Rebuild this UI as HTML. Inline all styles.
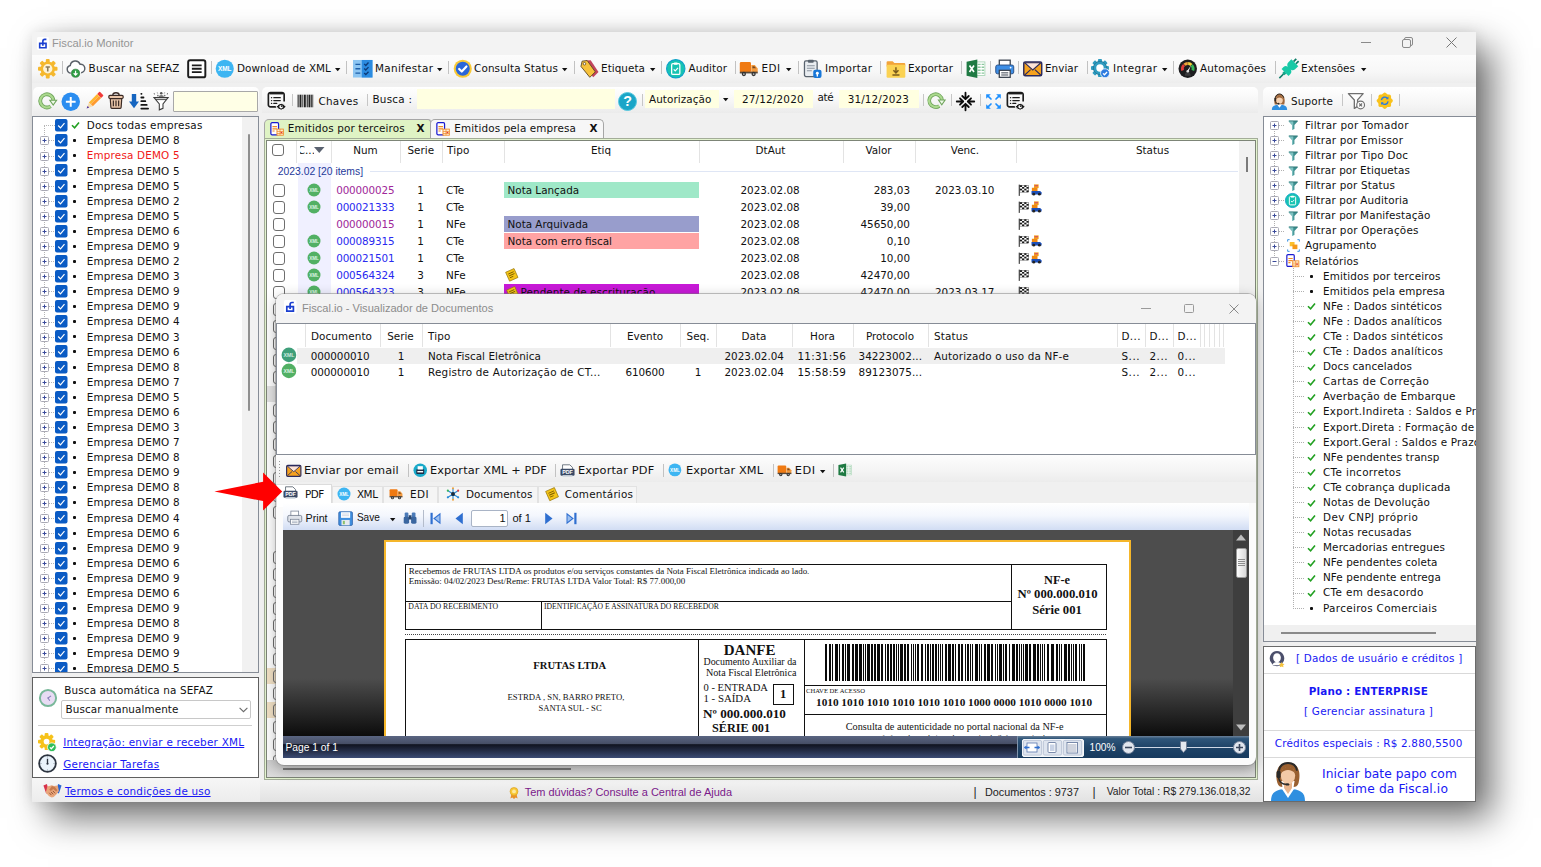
<!DOCTYPE html>
<html lang="pt-BR"><head><meta charset="utf-8"><title>Fiscal.io Monitor</title>
<style>
html,body{margin:0;padding:0;background:#fff;}
body{width:1541px;height:867px;overflow:hidden;position:relative;font-family:'DejaVu Sans','Liberation Sans',sans-serif;font-size:11px;}
#a div,#a span,#a svg{position:absolute;box-sizing:border-box;}
#a span{white-space:nowrap;}
#a svg{overflow:visible;}
#a{position:absolute;left:0;top:0;width:1541px;height:867px;overflow:hidden;}
</style></head>
<body><div id="a">
<div style="left:32px;top:32px;width:1443.6px;height:770px;background:#f0f0f0;box-shadow:0 0 14px rgba(0,0,0,.10),16px 16px 34px rgba(0,0,0,.56);"></div>
<div style="left:32px;top:32px;width:1443.6px;height:23px;background:#f3f3f3;"></div>
<svg style="left:36.5px;top:37px;" width="12" height="13" viewBox="0 0 12.5 13.5"><rect width="12.500" height="13.500" rx="1.500" fill="#fff"/><path d="M2.800 6.600h6.600v4.600H2.800zM6.100 9V4.400a1.900 1.900 0 0 1 1.900-1.900h1.800" stroke="#1b3fd0" stroke-width="1.700" fill="none"/></svg>
<span style="top:34.9px;line-height:16px;font-size:11.2px;color:#959595;font-family:'Liberation Sans',sans-serif;left:52px;">Fiscal.io Monitor</span>
<div style="left:1361px;top:42px;width:10px;height:1px;background:#8a8a8a;"></div>
<svg style="left:1402px;top:37px;" width="11" height="11" viewBox="0 0 11 11"><rect x=".5" y="2.5" width="8" height="8" rx="1.5" fill="none" stroke="#8a8a8a"/><path d="M2.5 2.5V2A1.5 1.5 0 0 1 4 .5h5A1.5 1.5 0 0 1 10.5 2v5A1.5 1.5 0 0 1 9 8.500h-.5" fill="none" stroke="#8a8a8a"/></svg>
<svg style="left:1446px;top:37px;" width="11" height="11" viewBox="0 0 11 11"><path d="M.5.5l10 10M10.500.5l-10 10" stroke="#777" stroke-width="1"/></svg>
<div style="left:32px;top:55px;width:1443.6px;height:28px;background:linear-gradient(#fcfcfc,#f7f7f7 60%,#ededed);"></div>
<svg style="left:38px;top:58.5px;" width="19.5" height="19.5" viewBox="0 0 20 20"><g transform="translate(10 10)"><g fill="#f5b82e"><rect x="-2" y="-10" width="4" height="5" rx="1" transform="rotate(0)"/><rect x="-2" y="-10" width="4" height="5" rx="1" transform="rotate(45)"/><rect x="-2" y="-10" width="4" height="5" rx="1" transform="rotate(90)"/><rect x="-2" y="-10" width="4" height="5" rx="1" transform="rotate(135)"/><rect x="-2" y="-10" width="4" height="5" rx="1" transform="rotate(180)"/><rect x="-2" y="-10" width="4" height="5" rx="1" transform="rotate(225)"/><rect x="-2" y="-10" width="4" height="5" rx="1" transform="rotate(270)"/><rect x="-2" y="-10" width="4" height="5" rx="1" transform="rotate(315)"/><circle r="7.4"/></g><circle r="4.8" fill="#fdf3d6"/><path d="M-2.2-2.6h4.4v1.6h-1.4v3.8h-1.6v-3.8h-1.4z" fill="#8a7b5a"/></g></svg>
<div style="left:62px;top:61px;width:1px;height:13px;background:#c2c2c2;"></div>
<svg style="left:66px;top:58.5px;" width="19.5" height="19.5" viewBox="0 0 20 20"><path d="M5 14.5a4 4 0 0 1-.6-7.9A5.2 5.2 0 0 1 14.4 5.4a4.3 4.3 0 0 1 1.1 8.6" fill="#fff" stroke="#5a6068" stroke-width="1.5"/><circle cx="9.8" cy="14.6" r="4.2" fill="#2f9e44" stroke="#1d6e2d" stroke-width=".6"/><path d="M9.8 12v4.2M7.9 14.6l1.9 1.9 1.9-1.9" stroke="#fff" stroke-width="1.2" fill="none"/></svg>
<span style="top:60.2px;line-height:16px;font-size:10.4px;color:#111;letter-spacing:0.248px;left:88.5px;">Buscar na SEFAZ</span>
<svg style="left:187px;top:58.5px;" width="19.5" height="19.5" viewBox="0 0 20 20"><rect x="1.2" y="1.2" width="17.6" height="17.6" rx="2" fill="#fff" stroke="#1c1c1c" stroke-width="2"/><path d="M5 6.5h10M5 10h10M5 13.5h10" stroke="#1c1c1c" stroke-width="1.8"/></svg>
<div style="left:211px;top:61px;width:1px;height:13px;background:#c2c2c2;"></div>
<svg style="left:215px;top:58.5px;" width="19.5" height="19.5" viewBox="0 0 20 20"><circle cx="10" cy="10" r="9.3" fill="#3db5f2"/><text x="10" y="12.4" font-size="6.6" font-weight="bold" font-family="Liberation Sans,sans-serif" text-anchor="middle" fill="#fff">XML</text></svg>
<span style="top:60.2px;line-height:16px;font-size:10.4px;color:#111;letter-spacing:0.057px;left:237px;">Download de XML</span>
<svg style="left:334.8px;top:67.6px;" width="5.4" height="3.4" viewBox="0 0 5.4 3.4"><path d="M0 0h5.400L2.700 3.200z" fill="#111"/></svg>
<div style="left:346px;top:61px;width:1px;height:13px;background:#c2c2c2;"></div>
<svg style="left:353px;top:58.5px;" width="19.5" height="19.5" viewBox="0 0 20 20"><rect x="0" y="1" width="20" height="18" fill="#8cc5f2"/><rect x="9" y="1" width="11" height="18" fill="#2b8be0"/><path d="M2.5 5.5h5M2.5 10h5M2.5 14.5h5" stroke="#1d5fa8" stroke-width="1.5"/><path d="M11.5 5l1.6 1.6 2.8-3M11.5 9.7l1.6 1.6 2.8-3M11.5 14.4l1.6 1.6 2.8-3" stroke="#0d3b78" stroke-width="1.4" fill="none"/></svg>
<span style="top:60.2px;line-height:16px;font-size:10.4px;color:#111;letter-spacing:0.33px;left:375px;">Manifestar</span>
<svg style="left:436.8px;top:67.6px;" width="5.4" height="3.4" viewBox="0 0 5.4 3.4"><path d="M0 0h5.400L2.700 3.200z" fill="#111"/></svg>
<div style="left:448px;top:61px;width:1px;height:13px;background:#c2c2c2;"></div>
<svg style="left:452.5px;top:58.5px;" width="19.5" height="19.5" viewBox="0 0 20 20"><circle cx="10" cy="10" r="9.3" fill="#f8c936"/><circle cx="10" cy="10" r="7.2" fill="#2a66d9"/><path d="M6.3 10.2l2.7 2.7 4.8-5.2" stroke="#fff" stroke-width="2.2" fill="none" stroke-linecap="round" stroke-linejoin="round"/></svg>
<span style="top:60.2px;line-height:16px;font-size:10.4px;color:#111;letter-spacing:0.142px;left:474px;">Consulta Status</span>
<svg style="left:561.8px;top:67.6px;" width="5.4" height="3.4" viewBox="0 0 5.4 3.4"><path d="M0 0h5.400L2.700 3.200z" fill="#111"/></svg>
<div style="left:574px;top:61px;width:1px;height:13px;background:#c2c2c2;"></div>
<svg style="left:579px;top:58.5px;" width="19.5" height="19.5" viewBox="0 0 20 20"><path d="M5.5 1.5l5-.3 8 12.2-5.4 5.2-8.8-11z" fill="#c2455e" transform="translate(1.5 0)"/><path d="M3.2 2.2l5.2-.6 8.3 11.6-5.6 5.6L2 7.6z" fill="#f7c23c" stroke="#5a4520" stroke-width=".9"/><circle cx="5.6" cy="4.9" r="1.3" fill="#fff" stroke="#5a4520" stroke-width=".8"/></svg>
<span style="top:60.2px;line-height:16px;font-size:10.4px;color:#111;letter-spacing:0.06px;left:601px;">Etiqueta</span>
<svg style="left:649.8px;top:67.6px;" width="5.4" height="3.4" viewBox="0 0 5.4 3.4"><path d="M0 0h5.400L2.700 3.200z" fill="#111"/></svg>
<div style="left:661px;top:61px;width:1px;height:13px;background:#c2c2c2;"></div>
<svg style="left:666px;top:58.5px;" width="19.5" height="19.5" viewBox="0 0 20 20"><circle cx="10" cy="10" r="9.4" fill="#17c3b2"/><circle cx="10" cy="10" r="9.4" fill="none" stroke="#0fa3c9" stroke-width="1.2"/><rect x="5.8" y="4.8" width="8.4" height="11" rx="1.3" fill="none" stroke="#fff" stroke-width="1.3"/><rect x="8" y="3.6" width="4" height="2.4" rx=".8" fill="#fff"/><path d="M7.9 10.6l1.6 1.6 2.8-3" stroke="#fff" stroke-width="1.2" fill="none"/></svg>
<span style="top:60.2px;line-height:16px;font-size:10.4px;color:#111;letter-spacing:0.098px;left:688.5px;">Auditor</span>
<div style="left:735px;top:61px;width:1px;height:13px;background:#c2c2c2;"></div>
<svg style="left:739px;top:58.5px;" width="19.5" height="19.5" viewBox="0 0 20 20"><rect x="0.8" y="3.2" width="11.5" height="10.6" rx="1.4" fill="#f07a12"/><path d="M12.6 6.2h3.6l3 3.6v4h-6.6z" fill="#f39a3e"/><path d="M13.8 7.4h2l1.7 2.2h-3.7z" fill="#7a4a20"/><rect x="0.8" y="13" width="18.4" height="1.8" fill="#5a4a3a"/><circle cx="5" cy="15.4" r="2.2" fill="#333"/><circle cx="15" cy="15.4" r="2.2" fill="#333"/><circle cx="5" cy="15.4" r=".9" fill="#bbb"/><circle cx="15" cy="15.4" r=".9" fill="#bbb"/></svg>
<span style="top:60.2px;line-height:16px;font-size:10.4px;color:#111;letter-spacing:0.426px;left:761.5px;">EDI</span>
<svg style="left:785.8px;top:67.6px;" width="5.4" height="3.4" viewBox="0 0 5.4 3.4"><path d="M0 0h5.400L2.700 3.200z" fill="#111"/></svg>
<div style="left:798px;top:61px;width:1px;height:13px;background:#c2c2c2;"></div>
<svg style="left:803px;top:58.5px;" width="19.5" height="19.5" viewBox="0 0 20 20"><rect x="1.5" y="2" width="13" height="16" rx="1.5" fill="#e9edf1" stroke="#59636e" stroke-width="1.3"/><rect x="5" y=".8" width="6" height="3" rx="1" fill="#59636e"/><path d="M4 7h8M4 9.5h8M4 12h5" stroke="#8a949e" stroke-width="1.1"/><rect x="10.5" y="11" width="8.5" height="8.5" rx="2" fill="#1877d8"/><circle cx="14.7" cy="14.6" r="1.5" fill="#fff"/><rect x="14" y="15" width="1.4" height="3" fill="#fff"/></svg>
<span style="top:60.2px;line-height:16px;font-size:10.4px;color:#111;letter-spacing:0.262px;left:825px;">Importar</span>
<div style="left:880px;top:61px;width:1px;height:13px;background:#c2c2c2;"></div>
<svg style="left:885.5px;top:58.5px;" width="19.5" height="19.5" viewBox="0 0 20 20"><path d="M.6 3.4a1.2 1.2 0 0 1 1.2-1.2h5l1.8 1.9h10a1.2 1.2 0 0 1 1.2 1.2v2.4H.6z" fill="#f2a33a"/><rect x=".6" y="5.8" width="19.2" height="13.4" rx="1.2" fill="#fbd253"/><path d="M10.2 8.4v5.4M7.6 11.6l2.6 2.6 2.6-2.6M6.6 16.4h7.2" stroke="#7a5b1c" stroke-width="1.5" fill="none"/></svg>
<span style="top:60.2px;line-height:16px;font-size:10.4px;color:#111;letter-spacing:0.044px;left:908px;">Exportar</span>
<div style="left:961px;top:61px;width:1px;height:13px;background:#c2c2c2;"></div>
<svg style="left:966px;top:58.5px;" width="19.5" height="19.5" viewBox="0 0 20 20"><rect x="8" y="3" width="11.4" height="14" fill="#fff" stroke="#9fd0ae" stroke-width=".8"/><path d="M12 5.5h3M16 5.5h2.6M12 8.5h3M16 8.5h2.6M12 11.5h3M16 11.5h2.6M12 14.5h3M16 14.5h2.6" stroke="#8cc79e" stroke-width="1.4"/><path d="M.6 2.8L11.6.6v18.8L.6 17.2z" fill="#1f7a43"/><path d="M3.6 6.6l4.6 6.8M8.2 6.6L3.6 13.4" stroke="#fff" stroke-width="1.7"/></svg>
<div style="left:990px;top:61px;width:1px;height:13px;background:#c2c2c2;"></div>
<svg style="left:995px;top:58.5px;" width="19.5" height="19.5" viewBox="0 0 20 20"><rect x="4.4" y="1.2" width="11.2" height="7" fill="#fff" stroke="#39414d" stroke-width="1.3"/><rect x=".8" y="6.2" width="18.4" height="9" rx="1.8" fill="#3d8ee6" stroke="#2a4f86" stroke-width="1"/><rect x="4.4" y="11.6" width="11.2" height="7.2" fill="#fff" stroke="#39414d" stroke-width="1.3"/><path d="M6.4 14.2h7.2M6.4 16.4h7.2" stroke="#39414d" stroke-width="1"/><circle cx="16" cy="8.8" r=".9" fill="#fff"/></svg>
<div style="left:1018px;top:61px;width:1px;height:13px;background:#c2c2c2;"></div>
<svg style="left:1022.5px;top:58.5px;" width="19.5" height="19.5" viewBox="0 0 20 20"><rect x=".8" y="3" width="18.400" height="14.200" rx="1.500" fill="#f6a21e" stroke="#2b2b5e" stroke-width="1.500"/><path d="M1.600 3.800L10 11.200l8.400-7.400z" fill="#fde3d6" stroke="#2b2b5e" stroke-width="1.100"/><path d="M1.800 16.400l6-5.400M18.200 16.400l-6-5.400" stroke="#2b2b5e" stroke-width="1.100"/></svg>
<span style="top:60.2px;line-height:16px;font-size:10.4px;color:#111;letter-spacing:0.029px;left:1045px;">Enviar</span>
<div style="left:1087px;top:61px;width:1px;height:13px;background:#c2c2c2;"></div>
<svg style="left:1091px;top:58.5px;" width="19.5" height="19.5" viewBox="0 0 20 20"><g transform="translate(9.2 9.2)"><g fill="#2f9cc0"><rect x="-2.1" y="-9.2" width="4.2" height="5" rx="1" transform="rotate(0)"/><rect x="-2.1" y="-9.2" width="4.2" height="5" rx="1" transform="rotate(45)"/><rect x="-2.1" y="-9.2" width="4.2" height="5" rx="1" transform="rotate(90)"/><rect x="-2.1" y="-9.2" width="4.2" height="5" rx="1" transform="rotate(135)"/><rect x="-2.1" y="-9.2" width="4.2" height="5" rx="1" transform="rotate(180)"/><rect x="-2.1" y="-9.2" width="4.2" height="5" rx="1" transform="rotate(225)"/><rect x="-2.1" y="-9.2" width="4.2" height="5" rx="1" transform="rotate(270)"/><rect x="-2.1" y="-9.2" width="4.2" height="5" rx="1" transform="rotate(315)"/><circle r="6.8"/></g><circle r="3.8" fill="#fff"/><circle r="6.8" fill="none" stroke="#1d6d8c" stroke-width=".7"/></g><circle cx="14.4" cy="14.6" r="4.6" fill="#2d7be0" stroke="#fff" stroke-width=".8"/><path d="M12.3 14.7l1.5 1.5 2.7-2.9" stroke="#fff" stroke-width="1.3" fill="none"/></svg>
<span style="top:60.2px;line-height:16px;font-size:10.4px;color:#111;letter-spacing:0.334px;left:1113px;">Integrar</span>
<svg style="left:1161.8px;top:67.6px;" width="5.4" height="3.4" viewBox="0 0 5.4 3.4"><path d="M0 0h5.400L2.700 3.200z" fill="#111"/></svg>
<div style="left:1173px;top:61px;width:1px;height:13px;background:#c2c2c2;"></div>
<svg style="left:1178px;top:58.5px;" width="19.5" height="19.5" viewBox="0 0 20 20"><circle cx="10" cy="10" r="9.5" fill="#1d1d1f"/><path d="M3.4 12.2a6.8 6.8 0 0 1 1.8-7l2 2a4 4 0 0 0-1.1 4.2z" fill="#e03a3a"/><path d="M5.6 4.8A6.8 6.8 0 0 1 10 3.2v2.9a4 4 0 0 0-2.4.8z" fill="#f2a33a"/><path d="M10.4 3.2a6.8 6.8 0 0 1 4.4 1.9l-2.1 2a4 4 0 0 0-2.3-1z" fill="#f2d23a"/><path d="M15.1 5.4a6.8 6.8 0 0 1 1.5 6.8l-2.7-.9a4 4 0 0 0-.9-3.9z" fill="#35b558"/><path d="M9.4 12.2l3.8-5.6-2.4 6.2z" fill="#fff"/><circle cx="10" cy="12.8" r="1.4" fill="#ddd"/><path d="M6.8 17.2l1-3h4.4l1 3z" fill="#3a3a3d"/></svg>
<span style="top:60.2px;line-height:16px;font-size:10.4px;color:#111;letter-spacing:0.161px;left:1200px;">Automações</span>
<div style="left:1275px;top:61px;width:1px;height:13px;background:#c2c2c2;"></div>
<svg style="left:1279px;top:58.5px;" width="19.5" height="19.5" viewBox="0 0 20 20"><g transform="rotate(45 10 10)"><rect x="7.400" y="-2.600" width="1.800" height="4" fill="#0d7d68"/><rect x="10.800" y="-2.600" width="1.800" height="4" fill="#0d7d68"/><path d="M5 1.200h10v4.600a5 4 0 0 1-10 0z" fill="#17c9a6"/><path d="M5 15.400v-2.800a5 4 0 0 1 10 0v2.800z" fill="#17c9a6"/><rect x="8.400" y="15.200" width="3.200" height="2.600" fill="#12a88b"/><rect x="9.200" y="17.600" width="1.600" height="6" fill="#0d7d68"/></g></svg>
<span style="top:60.2px;line-height:16px;font-size:10.4px;color:#111;letter-spacing:0.076px;left:1301px;">Extensões</span>
<svg style="left:1360.8px;top:67.6px;" width="5.4" height="3.4" viewBox="0 0 5.4 3.4"><path d="M0 0h5.400L2.700 3.200z" fill="#111"/></svg>
<div style="left:32px;top:780px;width:1443.6px;height:22px;background:linear-gradient(#f3f3f3,#e2e2e2);"></div>
<div style="left:32px;top:778px;width:228px;height:24px;background:linear-gradient(#f6f6f6,#ececec);"></div>
<svg style="left:508px;top:785.5px;" width="12" height="14" viewBox="0 0 20 20"><path d="M6 11l-2 8 3.2-1.6L10 20l2.8-2.6L16 19l-2-8z" fill="#e8912a"/><circle cx="10" cy="7.4" r="6.6" fill="#f8c936" stroke="#d89a1a" stroke-width="1"/><circle cx="10" cy="7.4" r="3.2" fill="#fde9a0"/></svg>
<span style="top:784.2px;line-height:16px;font-size:10.98px;color:#7a1a8a;font-family:'Liberation Sans',sans-serif;left:524.7px;">Tem dúvidas? Consulte a Central de Ajuda</span>
<span style="top:784.2px;line-height:16px;font-size:12px;color:#222;font-family:'Liberation Sans',sans-serif;left:973.5px;">|</span>
<span style="top:784.2px;line-height:16px;font-size:10.84px;color:#222;font-family:'Liberation Sans',sans-serif;left:985px;">Documentos : 9737</span>
<span style="top:784.2px;line-height:16px;font-size:12px;color:#222;font-family:'Liberation Sans',sans-serif;left:1092.5px;">|</span>
<span style="top:784.2px;line-height:16px;font-size:10.31px;color:#222;font-family:'Liberation Sans',sans-serif;left:1106.7px;">Valor Total : R$ 279.136.018,32</span>
<div style="left:33px;top:87px;width:226px;height:30px;background:linear-gradient(#ffffff,#f6f6f6 55%,#e9e9e9);border-radius:5px 5px 0 0;"></div>
<svg style="left:38.4px;top:92.4px;" width="19" height="18" viewBox="0 0 19 18"><path d="M15.400 8.400A6.600 6.600 0 1 0 12.600 14.300" fill="none" stroke="#6fa55c" stroke-width="3.800"/><path d="M15.400 8.400A6.600 6.600 0 1 0 12.600 14.300" fill="none" stroke="#abd98e" stroke-width="2.200"/><path d="M11.800 8.300h6.800l-3.400 4.800z" fill="#eef8e8" stroke="#6fa55c" stroke-width="1.100"/></svg>
<svg style="left:61px;top:91.5px;" width="19.5" height="19.5" viewBox="0 0 20 20"><circle cx="10" cy="10" r="9.5" fill="#2b8df0"/><path d="M10 5v10M5 10h10" stroke="#fff" stroke-width="2"/></svg>
<svg style="left:83.5px;top:91.5px;" width="19.2" height="19.2" viewBox="-1 -1 22 22"><g transform="rotate(45 10 10)"><rect x="6.800" y="-3" width="6.400" height="4" rx=".8" fill="#f03a3a"/><rect x="6.800" y="1" width="3.200" height="13.500" fill="#ffb52e"/><rect x="10" y="1" width="3.200" height="13.500" fill="#ff9a2e"/><path d="M6.800 14.500h6.400L10 21z" fill="#f6dcae"/><path d="M8.700 18.400h2.600L10 21.400z" fill="#4a2fa0"/></g></svg>
<svg style="left:107.7px;top:91.3px;" width="16" height="19.5" viewBox="0 0 20 20"><path d="M6 3.200a4 3.200 0 0 1 8 0" fill="none" stroke="#3a2a25" stroke-width="1.600"/><rect x="1" y="3.400" width="18" height="3.800" rx="1.500" fill="#e8c4a8" stroke="#3a2a25" stroke-width="1.500"/><path d="M2.800 7.400h14.400l-.8 10.800a1.600 1.600 0 0 1-1.600 1.300H5.200a1.600 1.600 0 0 1-1.600-1.300z" fill="#e8c4a8" stroke="#3a2a25" stroke-width="1.500"/><path d="M6.700 9.600v7.400M10 9.600v7.400M13.300 9.600v7.400" stroke="#3a2a25" stroke-width="1.500"/></svg>
<svg style="left:128.5px;top:93px;" width="20" height="16.5" viewBox="0 0 20 16.500"><path d="M5 1v9" stroke="#1565c0" stroke-width="4.400"/><path d="M0 8.600h10l-5 6.600z" fill="#1565c0"/><g stroke="#141414" stroke-width="1.800" stroke-linecap="round"><path d="M12.300 .8h.2M12.300 4.500h2.200M12.300 8.200h4M12.300 11.900h5.400M12.300 15.600h6.800"/></g></svg>
<svg style="left:153px;top:91.3px;" width="16" height="19.5" viewBox="0 0 16.500 20"><path d="M1 6.800h14.600l-5.300 6.400v4.600l-3.800 1.600v-6.200z" fill="#fff" stroke="#3a3a3a" stroke-width="1.100"/><path d="M3 8.800h10.600" stroke="#3a3a3a" stroke-width=".9"/><path d="M1.200 2l.3 1.600M4.400 1.500l.4 1M12 1.500l-.4 1M15 2l-.3 1.600" stroke="#555" stroke-width=".8"/><circle cx="8.500" cy="2.200" r="1.300" fill="#555"/><path d="M5.600 6.200a3 3 0 0 1 5.800 0" fill="#777"/><circle cx="5" cy="4.600" r=".9" fill="#777"/><circle cx="12" cy="4.600" r=".9" fill="#777"/></svg>
<div style="left:173px;top:91px;width:85px;height:21px;background:#ffffe6;border:1px solid #a8a8a8;border-radius:1px;"></div>
<div style="left:32px;top:116px;width:227px;height:557px;background:#fff;border:1px solid #868c96;"></div>
<div style="left:241.5px;top:117px;width:16.5px;height:555px;background:#f1f1f1;"></div>
<div style="left:247.5px;top:134px;width:2px;height:277px;background:#8f8f8f;border-radius:1px;"></div>
<div style="left:44px;top:126px;width:1px;height:546px;background:repeating-linear-gradient(#b5b5b5 0 1px,transparent 1px 2px);"></div>
<div style="left:44px;top:125px;width:11px;height:1px;background:repeating-linear-gradient(90deg,#b5b5b5 0 1px,transparent 1px 2px);"></div>
<svg style="left:54.5px;top:119px;" width="12.5" height="12.5" viewBox="0 0 12.5 12.5"><rect width="12.500" height="12.500" rx="2" fill="#0a5bc4"/><path d="M3.2 6.500l2.300 2.300 4-4.600" stroke="#fff" stroke-width="1.200" fill="none"/></svg>
<svg style="left:70.5px;top:121.4px;" width="9" height="8" viewBox="0 0 9 8"><path d="M1 4.200l2.600 2.600L8 1.400" stroke="#22a022" stroke-width="1.600" fill="none"/></svg>
<span style="top:117.3px;line-height:16px;font-size:10.4px;color:#111;letter-spacing:0.215px;left:86.8px;">Docs todas empresas</span>
<div style="left:49px;top:140px;width:6px;height:1px;background:repeating-linear-gradient(90deg,#b5b5b5 0 1px,transparent 1px 2px);"></div>
<svg style="left:40px;top:136px;" width="9" height="9" viewBox="0 0 9 9"><rect x=".5" y=".5" width="8" height="8" rx="1" fill="#fff" stroke="#a9a9b4"/><path d="M2.500 4.500h4" stroke="#3a4a9a" stroke-width="1"/><path d="M4.500 2.500v4" stroke="#3a4a9a" stroke-width="1"/></svg>
<svg style="left:54.5px;top:134px;" width="12.5" height="12.5" viewBox="0 0 12.5 12.5"><rect width="12.500" height="12.500" rx="2" fill="#0a5bc4"/><path d="M3.2 6.500l2.300 2.300 4-4.600" stroke="#fff" stroke-width="1.200" fill="none"/></svg>
<div style="left:73.3px;top:139.286px;width:3px;height:3px;background:#111;border-radius:1px;"></div>
<span style="top:132.386px;line-height:16px;font-size:10.4px;color:#111;letter-spacing:0.176px;left:86.8px;">Empresa DEMO 8</span>
<div style="left:49px;top:156px;width:6px;height:1px;background:repeating-linear-gradient(90deg,#b5b5b5 0 1px,transparent 1px 2px);"></div>
<svg style="left:40px;top:152px;" width="9" height="9" viewBox="0 0 9 9"><rect x=".5" y=".5" width="8" height="8" rx="1" fill="#fff" stroke="#a9a9b4"/><path d="M2.500 4.500h4" stroke="#3a4a9a" stroke-width="1"/><path d="M4.500 2.500v4" stroke="#3a4a9a" stroke-width="1"/></svg>
<svg style="left:54.5px;top:149px;" width="12.5" height="12.5" viewBox="0 0 12.5 12.5"><rect width="12.500" height="12.500" rx="2" fill="#0a5bc4"/><path d="M3.2 6.500l2.300 2.300 4-4.600" stroke="#fff" stroke-width="1.200" fill="none"/></svg>
<div style="left:73.3px;top:154.372px;width:3px;height:3px;background:#111;border-radius:1px;"></div>
<span style="top:147.472px;line-height:16px;font-size:10.4px;color:#f01818;letter-spacing:0.176px;left:86.8px;">Empresa DEMO 5</span>
<div style="left:49px;top:171px;width:6px;height:1px;background:repeating-linear-gradient(90deg,#b5b5b5 0 1px,transparent 1px 2px);"></div>
<svg style="left:40px;top:167px;" width="9" height="9" viewBox="0 0 9 9"><rect x=".5" y=".5" width="8" height="8" rx="1" fill="#fff" stroke="#a9a9b4"/><path d="M2.500 4.500h4" stroke="#3a4a9a" stroke-width="1"/><path d="M4.500 2.500v4" stroke="#3a4a9a" stroke-width="1"/></svg>
<svg style="left:54.5px;top:164px;" width="12.5" height="12.5" viewBox="0 0 12.5 12.5"><rect width="12.500" height="12.500" rx="2" fill="#0a5bc4"/><path d="M3.2 6.500l2.300 2.300 4-4.600" stroke="#fff" stroke-width="1.200" fill="none"/></svg>
<div style="left:73.3px;top:169.458px;width:3px;height:3px;background:#111;border-radius:1px;"></div>
<span style="top:162.558px;line-height:16px;font-size:10.4px;color:#111;letter-spacing:0.176px;left:86.8px;">Empresa DEMO 5</span>
<div style="left:49px;top:186px;width:6px;height:1px;background:repeating-linear-gradient(90deg,#b5b5b5 0 1px,transparent 1px 2px);"></div>
<svg style="left:40px;top:182px;" width="9" height="9" viewBox="0 0 9 9"><rect x=".5" y=".5" width="8" height="8" rx="1" fill="#fff" stroke="#a9a9b4"/><path d="M2.500 4.500h4" stroke="#3a4a9a" stroke-width="1"/><path d="M4.500 2.500v4" stroke="#3a4a9a" stroke-width="1"/></svg>
<svg style="left:54.5px;top:180px;" width="12.5" height="12.5" viewBox="0 0 12.5 12.5"><rect width="12.500" height="12.500" rx="2" fill="#0a5bc4"/><path d="M3.2 6.500l2.300 2.300 4-4.600" stroke="#fff" stroke-width="1.200" fill="none"/></svg>
<div style="left:73.3px;top:184.544px;width:3px;height:3px;background:#111;border-radius:1px;"></div>
<span style="top:177.644px;line-height:16px;font-size:10.4px;color:#111;letter-spacing:0.176px;left:86.8px;">Empresa DEMO 5</span>
<div style="left:49px;top:201px;width:6px;height:1px;background:repeating-linear-gradient(90deg,#b5b5b5 0 1px,transparent 1px 2px);"></div>
<svg style="left:40px;top:197px;" width="9" height="9" viewBox="0 0 9 9"><rect x=".5" y=".5" width="8" height="8" rx="1" fill="#fff" stroke="#a9a9b4"/><path d="M2.500 4.500h4" stroke="#3a4a9a" stroke-width="1"/><path d="M4.500 2.500v4" stroke="#3a4a9a" stroke-width="1"/></svg>
<svg style="left:54.5px;top:195px;" width="12.5" height="12.5" viewBox="0 0 12.5 12.5"><rect width="12.500" height="12.500" rx="2" fill="#0a5bc4"/><path d="M3.2 6.500l2.300 2.300 4-4.600" stroke="#fff" stroke-width="1.200" fill="none"/></svg>
<div style="left:73.3px;top:199.63px;width:3px;height:3px;background:#111;border-radius:1px;"></div>
<span style="top:192.73px;line-height:16px;font-size:10.4px;color:#111;letter-spacing:0.176px;left:86.8px;">Empresa DEMO 2</span>
<div style="left:49px;top:216px;width:6px;height:1px;background:repeating-linear-gradient(90deg,#b5b5b5 0 1px,transparent 1px 2px);"></div>
<svg style="left:40px;top:212px;" width="9" height="9" viewBox="0 0 9 9"><rect x=".5" y=".5" width="8" height="8" rx="1" fill="#fff" stroke="#a9a9b4"/><path d="M2.500 4.500h4" stroke="#3a4a9a" stroke-width="1"/><path d="M4.500 2.500v4" stroke="#3a4a9a" stroke-width="1"/></svg>
<svg style="left:54.5px;top:210px;" width="12.5" height="12.5" viewBox="0 0 12.5 12.5"><rect width="12.500" height="12.500" rx="2" fill="#0a5bc4"/><path d="M3.2 6.500l2.300 2.300 4-4.600" stroke="#fff" stroke-width="1.200" fill="none"/></svg>
<div style="left:73.3px;top:214.716px;width:3px;height:3px;background:#111;border-radius:1px;"></div>
<span style="top:207.816px;line-height:16px;font-size:10.4px;color:#111;letter-spacing:0.176px;left:86.8px;">Empresa DEMO 5</span>
<div style="left:49px;top:231px;width:6px;height:1px;background:repeating-linear-gradient(90deg,#b5b5b5 0 1px,transparent 1px 2px);"></div>
<svg style="left:40px;top:227px;" width="9" height="9" viewBox="0 0 9 9"><rect x=".5" y=".5" width="8" height="8" rx="1" fill="#fff" stroke="#a9a9b4"/><path d="M2.500 4.500h4" stroke="#3a4a9a" stroke-width="1"/><path d="M4.500 2.500v4" stroke="#3a4a9a" stroke-width="1"/></svg>
<svg style="left:54.5px;top:225px;" width="12.5" height="12.5" viewBox="0 0 12.5 12.5"><rect width="12.500" height="12.500" rx="2" fill="#0a5bc4"/><path d="M3.2 6.500l2.300 2.300 4-4.600" stroke="#fff" stroke-width="1.200" fill="none"/></svg>
<div style="left:73.3px;top:229.802px;width:3px;height:3px;background:#111;border-radius:1px;"></div>
<span style="top:222.902px;line-height:16px;font-size:10.4px;color:#111;letter-spacing:0.176px;left:86.8px;">Empresa DEMO 6</span>
<div style="left:49px;top:246px;width:6px;height:1px;background:repeating-linear-gradient(90deg,#b5b5b5 0 1px,transparent 1px 2px);"></div>
<svg style="left:40px;top:242px;" width="9" height="9" viewBox="0 0 9 9"><rect x=".5" y=".5" width="8" height="8" rx="1" fill="#fff" stroke="#a9a9b4"/><path d="M2.500 4.500h4" stroke="#3a4a9a" stroke-width="1"/><path d="M4.500 2.500v4" stroke="#3a4a9a" stroke-width="1"/></svg>
<svg style="left:54.5px;top:240px;" width="12.5" height="12.5" viewBox="0 0 12.5 12.5"><rect width="12.500" height="12.500" rx="2" fill="#0a5bc4"/><path d="M3.2 6.500l2.300 2.300 4-4.600" stroke="#fff" stroke-width="1.200" fill="none"/></svg>
<div style="left:73.3px;top:244.888px;width:3px;height:3px;background:#111;border-radius:1px;"></div>
<span style="top:237.988px;line-height:16px;font-size:10.4px;color:#111;letter-spacing:0.176px;left:86.8px;">Empresa DEMO 9</span>
<div style="left:49px;top:261px;width:6px;height:1px;background:repeating-linear-gradient(90deg,#b5b5b5 0 1px,transparent 1px 2px);"></div>
<svg style="left:40px;top:257px;" width="9" height="9" viewBox="0 0 9 9"><rect x=".5" y=".5" width="8" height="8" rx="1" fill="#fff" stroke="#a9a9b4"/><path d="M2.500 4.500h4" stroke="#3a4a9a" stroke-width="1"/><path d="M4.500 2.500v4" stroke="#3a4a9a" stroke-width="1"/></svg>
<svg style="left:54.5px;top:255px;" width="12.5" height="12.5" viewBox="0 0 12.5 12.5"><rect width="12.500" height="12.500" rx="2" fill="#0a5bc4"/><path d="M3.2 6.500l2.300 2.300 4-4.600" stroke="#fff" stroke-width="1.200" fill="none"/></svg>
<div style="left:73.3px;top:259.974px;width:3px;height:3px;background:#111;border-radius:1px;"></div>
<span style="top:253.074px;line-height:16px;font-size:10.4px;color:#111;letter-spacing:0.176px;left:86.8px;">Empresa DEMO 2</span>
<div style="left:49px;top:276px;width:6px;height:1px;background:repeating-linear-gradient(90deg,#b5b5b5 0 1px,transparent 1px 2px);"></div>
<svg style="left:40px;top:272px;" width="9" height="9" viewBox="0 0 9 9"><rect x=".5" y=".5" width="8" height="8" rx="1" fill="#fff" stroke="#a9a9b4"/><path d="M2.500 4.500h4" stroke="#3a4a9a" stroke-width="1"/><path d="M4.500 2.500v4" stroke="#3a4a9a" stroke-width="1"/></svg>
<svg style="left:54.5px;top:270px;" width="12.5" height="12.5" viewBox="0 0 12.5 12.5"><rect width="12.500" height="12.500" rx="2" fill="#0a5bc4"/><path d="M3.2 6.500l2.300 2.300 4-4.600" stroke="#fff" stroke-width="1.200" fill="none"/></svg>
<div style="left:73.3px;top:275.06px;width:3px;height:3px;background:#111;border-radius:1px;"></div>
<span style="top:268.16px;line-height:16px;font-size:10.4px;color:#111;letter-spacing:0.176px;left:86.8px;">Empresa DEMO 3</span>
<div style="left:49px;top:291px;width:6px;height:1px;background:repeating-linear-gradient(90deg,#b5b5b5 0 1px,transparent 1px 2px);"></div>
<svg style="left:40px;top:287px;" width="9" height="9" viewBox="0 0 9 9"><rect x=".5" y=".5" width="8" height="8" rx="1" fill="#fff" stroke="#a9a9b4"/><path d="M2.500 4.500h4" stroke="#3a4a9a" stroke-width="1"/><path d="M4.500 2.500v4" stroke="#3a4a9a" stroke-width="1"/></svg>
<svg style="left:54.5px;top:285px;" width="12.5" height="12.5" viewBox="0 0 12.5 12.5"><rect width="12.500" height="12.500" rx="2" fill="#0a5bc4"/><path d="M3.2 6.500l2.300 2.300 4-4.600" stroke="#fff" stroke-width="1.200" fill="none"/></svg>
<div style="left:73.3px;top:290.146px;width:3px;height:3px;background:#111;border-radius:1px;"></div>
<span style="top:283.246px;line-height:16px;font-size:10.4px;color:#111;letter-spacing:0.176px;left:86.8px;">Empresa DEMO 9</span>
<div style="left:49px;top:306px;width:6px;height:1px;background:repeating-linear-gradient(90deg,#b5b5b5 0 1px,transparent 1px 2px);"></div>
<svg style="left:40px;top:302px;" width="9" height="9" viewBox="0 0 9 9"><rect x=".5" y=".5" width="8" height="8" rx="1" fill="#fff" stroke="#a9a9b4"/><path d="M2.500 4.500h4" stroke="#3a4a9a" stroke-width="1"/><path d="M4.500 2.500v4" stroke="#3a4a9a" stroke-width="1"/></svg>
<svg style="left:54.5px;top:300px;" width="12.5" height="12.5" viewBox="0 0 12.5 12.5"><rect width="12.500" height="12.500" rx="2" fill="#0a5bc4"/><path d="M3.2 6.500l2.300 2.300 4-4.600" stroke="#fff" stroke-width="1.200" fill="none"/></svg>
<div style="left:73.3px;top:305.232px;width:3px;height:3px;background:#111;border-radius:1px;"></div>
<span style="top:298.332px;line-height:16px;font-size:10.4px;color:#111;letter-spacing:0.176px;left:86.8px;">Empresa DEMO 9</span>
<div style="left:49px;top:322px;width:6px;height:1px;background:repeating-linear-gradient(90deg,#b5b5b5 0 1px,transparent 1px 2px);"></div>
<svg style="left:40px;top:318px;" width="9" height="9" viewBox="0 0 9 9"><rect x=".5" y=".5" width="8" height="8" rx="1" fill="#fff" stroke="#a9a9b4"/><path d="M2.500 4.500h4" stroke="#3a4a9a" stroke-width="1"/><path d="M4.500 2.500v4" stroke="#3a4a9a" stroke-width="1"/></svg>
<svg style="left:54.5px;top:315px;" width="12.5" height="12.5" viewBox="0 0 12.5 12.5"><rect width="12.500" height="12.500" rx="2" fill="#0a5bc4"/><path d="M3.2 6.500l2.300 2.300 4-4.600" stroke="#fff" stroke-width="1.200" fill="none"/></svg>
<div style="left:73.3px;top:320.318px;width:3px;height:3px;background:#111;border-radius:1px;"></div>
<span style="top:313.418px;line-height:16px;font-size:10.4px;color:#111;letter-spacing:0.176px;left:86.8px;">Empresa DEMO 4</span>
<div style="left:49px;top:337px;width:6px;height:1px;background:repeating-linear-gradient(90deg,#b5b5b5 0 1px,transparent 1px 2px);"></div>
<svg style="left:40px;top:333px;" width="9" height="9" viewBox="0 0 9 9"><rect x=".5" y=".5" width="8" height="8" rx="1" fill="#fff" stroke="#a9a9b4"/><path d="M2.500 4.500h4" stroke="#3a4a9a" stroke-width="1"/><path d="M4.500 2.500v4" stroke="#3a4a9a" stroke-width="1"/></svg>
<svg style="left:54.5px;top:330px;" width="12.5" height="12.5" viewBox="0 0 12.5 12.5"><rect width="12.500" height="12.500" rx="2" fill="#0a5bc4"/><path d="M3.2 6.500l2.300 2.300 4-4.600" stroke="#fff" stroke-width="1.200" fill="none"/></svg>
<div style="left:73.3px;top:335.404px;width:3px;height:3px;background:#111;border-radius:1px;"></div>
<span style="top:328.504px;line-height:16px;font-size:10.4px;color:#111;letter-spacing:0.176px;left:86.8px;">Empresa DEMO 3</span>
<div style="left:49px;top:352px;width:6px;height:1px;background:repeating-linear-gradient(90deg,#b5b5b5 0 1px,transparent 1px 2px);"></div>
<svg style="left:40px;top:348px;" width="9" height="9" viewBox="0 0 9 9"><rect x=".5" y=".5" width="8" height="8" rx="1" fill="#fff" stroke="#a9a9b4"/><path d="M2.500 4.500h4" stroke="#3a4a9a" stroke-width="1"/><path d="M4.500 2.500v4" stroke="#3a4a9a" stroke-width="1"/></svg>
<svg style="left:54.5px;top:345px;" width="12.5" height="12.5" viewBox="0 0 12.5 12.5"><rect width="12.500" height="12.500" rx="2" fill="#0a5bc4"/><path d="M3.2 6.500l2.300 2.300 4-4.600" stroke="#fff" stroke-width="1.200" fill="none"/></svg>
<div style="left:73.3px;top:350.49px;width:3px;height:3px;background:#111;border-radius:1px;"></div>
<span style="top:343.59px;line-height:16px;font-size:10.4px;color:#111;letter-spacing:0.176px;left:86.8px;">Empresa DEMO 6</span>
<div style="left:49px;top:367px;width:6px;height:1px;background:repeating-linear-gradient(90deg,#b5b5b5 0 1px,transparent 1px 2px);"></div>
<svg style="left:40px;top:363px;" width="9" height="9" viewBox="0 0 9 9"><rect x=".5" y=".5" width="8" height="8" rx="1" fill="#fff" stroke="#a9a9b4"/><path d="M2.500 4.500h4" stroke="#3a4a9a" stroke-width="1"/><path d="M4.500 2.500v4" stroke="#3a4a9a" stroke-width="1"/></svg>
<svg style="left:54.5px;top:361px;" width="12.5" height="12.5" viewBox="0 0 12.5 12.5"><rect width="12.500" height="12.500" rx="2" fill="#0a5bc4"/><path d="M3.2 6.500l2.300 2.300 4-4.600" stroke="#fff" stroke-width="1.200" fill="none"/></svg>
<div style="left:73.3px;top:365.576px;width:3px;height:3px;background:#111;border-radius:1px;"></div>
<span style="top:358.676px;line-height:16px;font-size:10.4px;color:#111;letter-spacing:0.176px;left:86.8px;">Empresa DEMO 8</span>
<div style="left:49px;top:382px;width:6px;height:1px;background:repeating-linear-gradient(90deg,#b5b5b5 0 1px,transparent 1px 2px);"></div>
<svg style="left:40px;top:378px;" width="9" height="9" viewBox="0 0 9 9"><rect x=".5" y=".5" width="8" height="8" rx="1" fill="#fff" stroke="#a9a9b4"/><path d="M2.500 4.500h4" stroke="#3a4a9a" stroke-width="1"/><path d="M4.500 2.500v4" stroke="#3a4a9a" stroke-width="1"/></svg>
<svg style="left:54.5px;top:376px;" width="12.5" height="12.5" viewBox="0 0 12.5 12.5"><rect width="12.500" height="12.500" rx="2" fill="#0a5bc4"/><path d="M3.2 6.500l2.300 2.300 4-4.600" stroke="#fff" stroke-width="1.200" fill="none"/></svg>
<div style="left:73.3px;top:380.662px;width:3px;height:3px;background:#111;border-radius:1px;"></div>
<span style="top:373.762px;line-height:16px;font-size:10.4px;color:#111;letter-spacing:0.176px;left:86.8px;">Empresa DEMO 7</span>
<div style="left:49px;top:397px;width:6px;height:1px;background:repeating-linear-gradient(90deg,#b5b5b5 0 1px,transparent 1px 2px);"></div>
<svg style="left:40px;top:393px;" width="9" height="9" viewBox="0 0 9 9"><rect x=".5" y=".5" width="8" height="8" rx="1" fill="#fff" stroke="#a9a9b4"/><path d="M2.500 4.500h4" stroke="#3a4a9a" stroke-width="1"/><path d="M4.500 2.500v4" stroke="#3a4a9a" stroke-width="1"/></svg>
<svg style="left:54.5px;top:391px;" width="12.5" height="12.5" viewBox="0 0 12.5 12.5"><rect width="12.500" height="12.500" rx="2" fill="#0a5bc4"/><path d="M3.2 6.500l2.300 2.300 4-4.600" stroke="#fff" stroke-width="1.200" fill="none"/></svg>
<div style="left:73.3px;top:395.748px;width:3px;height:3px;background:#111;border-radius:1px;"></div>
<span style="top:388.848px;line-height:16px;font-size:10.4px;color:#111;letter-spacing:0.176px;left:86.8px;">Empresa DEMO 5</span>
<div style="left:49px;top:412px;width:6px;height:1px;background:repeating-linear-gradient(90deg,#b5b5b5 0 1px,transparent 1px 2px);"></div>
<svg style="left:40px;top:408px;" width="9" height="9" viewBox="0 0 9 9"><rect x=".5" y=".5" width="8" height="8" rx="1" fill="#fff" stroke="#a9a9b4"/><path d="M2.500 4.500h4" stroke="#3a4a9a" stroke-width="1"/><path d="M4.500 2.500v4" stroke="#3a4a9a" stroke-width="1"/></svg>
<svg style="left:54.5px;top:406px;" width="12.5" height="12.5" viewBox="0 0 12.5 12.5"><rect width="12.500" height="12.500" rx="2" fill="#0a5bc4"/><path d="M3.2 6.500l2.300 2.300 4-4.600" stroke="#fff" stroke-width="1.200" fill="none"/></svg>
<div style="left:73.3px;top:410.834px;width:3px;height:3px;background:#111;border-radius:1px;"></div>
<span style="top:403.934px;line-height:16px;font-size:10.4px;color:#111;letter-spacing:0.176px;left:86.8px;">Empresa DEMO 6</span>
<div style="left:49px;top:427px;width:6px;height:1px;background:repeating-linear-gradient(90deg,#b5b5b5 0 1px,transparent 1px 2px);"></div>
<svg style="left:40px;top:423px;" width="9" height="9" viewBox="0 0 9 9"><rect x=".5" y=".5" width="8" height="8" rx="1" fill="#fff" stroke="#a9a9b4"/><path d="M2.500 4.500h4" stroke="#3a4a9a" stroke-width="1"/><path d="M4.500 2.500v4" stroke="#3a4a9a" stroke-width="1"/></svg>
<svg style="left:54.5px;top:421px;" width="12.5" height="12.5" viewBox="0 0 12.5 12.5"><rect width="12.500" height="12.500" rx="2" fill="#0a5bc4"/><path d="M3.2 6.500l2.300 2.300 4-4.600" stroke="#fff" stroke-width="1.200" fill="none"/></svg>
<div style="left:73.3px;top:425.92px;width:3px;height:3px;background:#111;border-radius:1px;"></div>
<span style="top:419.02px;line-height:16px;font-size:10.4px;color:#111;letter-spacing:0.176px;left:86.8px;">Empresa DEMO 3</span>
<div style="left:49px;top:442px;width:6px;height:1px;background:repeating-linear-gradient(90deg,#b5b5b5 0 1px,transparent 1px 2px);"></div>
<svg style="left:40px;top:438px;" width="9" height="9" viewBox="0 0 9 9"><rect x=".5" y=".5" width="8" height="8" rx="1" fill="#fff" stroke="#a9a9b4"/><path d="M2.500 4.500h4" stroke="#3a4a9a" stroke-width="1"/><path d="M4.500 2.500v4" stroke="#3a4a9a" stroke-width="1"/></svg>
<svg style="left:54.5px;top:436px;" width="12.5" height="12.5" viewBox="0 0 12.5 12.5"><rect width="12.500" height="12.500" rx="2" fill="#0a5bc4"/><path d="M3.2 6.500l2.300 2.300 4-4.600" stroke="#fff" stroke-width="1.200" fill="none"/></svg>
<div style="left:73.3px;top:441.006px;width:3px;height:3px;background:#111;border-radius:1px;"></div>
<span style="top:434.106px;line-height:16px;font-size:10.4px;color:#111;letter-spacing:0.176px;left:86.8px;">Empresa DEMO 7</span>
<div style="left:49px;top:457px;width:6px;height:1px;background:repeating-linear-gradient(90deg,#b5b5b5 0 1px,transparent 1px 2px);"></div>
<svg style="left:40px;top:453px;" width="9" height="9" viewBox="0 0 9 9"><rect x=".5" y=".5" width="8" height="8" rx="1" fill="#fff" stroke="#a9a9b4"/><path d="M2.500 4.500h4" stroke="#3a4a9a" stroke-width="1"/><path d="M4.500 2.500v4" stroke="#3a4a9a" stroke-width="1"/></svg>
<svg style="left:54.5px;top:451px;" width="12.5" height="12.5" viewBox="0 0 12.5 12.5"><rect width="12.500" height="12.500" rx="2" fill="#0a5bc4"/><path d="M3.2 6.500l2.300 2.300 4-4.600" stroke="#fff" stroke-width="1.200" fill="none"/></svg>
<div style="left:73.3px;top:456.092px;width:3px;height:3px;background:#111;border-radius:1px;"></div>
<span style="top:449.192px;line-height:16px;font-size:10.4px;color:#111;letter-spacing:0.176px;left:86.8px;">Empresa DEMO 8</span>
<div style="left:49px;top:472px;width:6px;height:1px;background:repeating-linear-gradient(90deg,#b5b5b5 0 1px,transparent 1px 2px);"></div>
<svg style="left:40px;top:468px;" width="9" height="9" viewBox="0 0 9 9"><rect x=".5" y=".5" width="8" height="8" rx="1" fill="#fff" stroke="#a9a9b4"/><path d="M2.500 4.500h4" stroke="#3a4a9a" stroke-width="1"/><path d="M4.500 2.500v4" stroke="#3a4a9a" stroke-width="1"/></svg>
<svg style="left:54.5px;top:466px;" width="12.5" height="12.5" viewBox="0 0 12.5 12.5"><rect width="12.500" height="12.500" rx="2" fill="#0a5bc4"/><path d="M3.2 6.500l2.300 2.300 4-4.600" stroke="#fff" stroke-width="1.200" fill="none"/></svg>
<div style="left:73.3px;top:471.178px;width:3px;height:3px;background:#111;border-radius:1px;"></div>
<span style="top:464.278px;line-height:16px;font-size:10.4px;color:#111;letter-spacing:0.176px;left:86.8px;">Empresa DEMO 9</span>
<div style="left:49px;top:487px;width:6px;height:1px;background:repeating-linear-gradient(90deg,#b5b5b5 0 1px,transparent 1px 2px);"></div>
<svg style="left:40px;top:483px;" width="9" height="9" viewBox="0 0 9 9"><rect x=".5" y=".5" width="8" height="8" rx="1" fill="#fff" stroke="#a9a9b4"/><path d="M2.500 4.500h4" stroke="#3a4a9a" stroke-width="1"/><path d="M4.500 2.500v4" stroke="#3a4a9a" stroke-width="1"/></svg>
<svg style="left:54.5px;top:481px;" width="12.5" height="12.5" viewBox="0 0 12.5 12.5"><rect width="12.500" height="12.500" rx="2" fill="#0a5bc4"/><path d="M3.2 6.500l2.300 2.300 4-4.600" stroke="#fff" stroke-width="1.200" fill="none"/></svg>
<div style="left:73.3px;top:486.264px;width:3px;height:3px;background:#111;border-radius:1px;"></div>
<span style="top:479.364px;line-height:16px;font-size:10.4px;color:#111;letter-spacing:0.176px;left:86.8px;">Empresa DEMO 8</span>
<div style="left:49px;top:503px;width:6px;height:1px;background:repeating-linear-gradient(90deg,#b5b5b5 0 1px,transparent 1px 2px);"></div>
<svg style="left:40px;top:499px;" width="9" height="9" viewBox="0 0 9 9"><rect x=".5" y=".5" width="8" height="8" rx="1" fill="#fff" stroke="#a9a9b4"/><path d="M2.500 4.500h4" stroke="#3a4a9a" stroke-width="1"/><path d="M4.500 2.500v4" stroke="#3a4a9a" stroke-width="1"/></svg>
<svg style="left:54.5px;top:496px;" width="12.5" height="12.5" viewBox="0 0 12.5 12.5"><rect width="12.500" height="12.500" rx="2" fill="#0a5bc4"/><path d="M3.2 6.500l2.300 2.300 4-4.600" stroke="#fff" stroke-width="1.200" fill="none"/></svg>
<div style="left:73.3px;top:501.35px;width:3px;height:3px;background:#111;border-radius:1px;"></div>
<span style="top:494.45px;line-height:16px;font-size:10.4px;color:#111;letter-spacing:0.176px;left:86.8px;">Empresa DEMO 8</span>
<div style="left:49px;top:518px;width:6px;height:1px;background:repeating-linear-gradient(90deg,#b5b5b5 0 1px,transparent 1px 2px);"></div>
<svg style="left:40px;top:514px;" width="9" height="9" viewBox="0 0 9 9"><rect x=".5" y=".5" width="8" height="8" rx="1" fill="#fff" stroke="#a9a9b4"/><path d="M2.500 4.500h4" stroke="#3a4a9a" stroke-width="1"/><path d="M4.500 2.500v4" stroke="#3a4a9a" stroke-width="1"/></svg>
<svg style="left:54.5px;top:511px;" width="12.5" height="12.5" viewBox="0 0 12.5 12.5"><rect width="12.500" height="12.500" rx="2" fill="#0a5bc4"/><path d="M3.2 6.500l2.300 2.300 4-4.600" stroke="#fff" stroke-width="1.200" fill="none"/></svg>
<div style="left:73.3px;top:516.436px;width:3px;height:3px;background:#111;border-radius:1px;"></div>
<span style="top:509.536px;line-height:16px;font-size:10.4px;color:#111;letter-spacing:0.176px;left:86.8px;">Empresa DEMO 4</span>
<div style="left:49px;top:533px;width:6px;height:1px;background:repeating-linear-gradient(90deg,#b5b5b5 0 1px,transparent 1px 2px);"></div>
<svg style="left:40px;top:529px;" width="9" height="9" viewBox="0 0 9 9"><rect x=".5" y=".5" width="8" height="8" rx="1" fill="#fff" stroke="#a9a9b4"/><path d="M2.500 4.500h4" stroke="#3a4a9a" stroke-width="1"/><path d="M4.500 2.500v4" stroke="#3a4a9a" stroke-width="1"/></svg>
<svg style="left:54.5px;top:527px;" width="12.5" height="12.5" viewBox="0 0 12.5 12.5"><rect width="12.500" height="12.500" rx="2" fill="#0a5bc4"/><path d="M3.2 6.500l2.300 2.300 4-4.600" stroke="#fff" stroke-width="1.200" fill="none"/></svg>
<div style="left:73.3px;top:531.522px;width:3px;height:3px;background:#111;border-radius:1px;"></div>
<span style="top:524.622px;line-height:16px;font-size:10.4px;color:#111;letter-spacing:0.176px;left:86.8px;">Empresa DEMO 6</span>
<div style="left:49px;top:548px;width:6px;height:1px;background:repeating-linear-gradient(90deg,#b5b5b5 0 1px,transparent 1px 2px);"></div>
<svg style="left:40px;top:544px;" width="9" height="9" viewBox="0 0 9 9"><rect x=".5" y=".5" width="8" height="8" rx="1" fill="#fff" stroke="#a9a9b4"/><path d="M2.500 4.500h4" stroke="#3a4a9a" stroke-width="1"/><path d="M4.500 2.500v4" stroke="#3a4a9a" stroke-width="1"/></svg>
<svg style="left:54.5px;top:542px;" width="12.5" height="12.5" viewBox="0 0 12.5 12.5"><rect width="12.500" height="12.500" rx="2" fill="#0a5bc4"/><path d="M3.2 6.500l2.300 2.300 4-4.600" stroke="#fff" stroke-width="1.200" fill="none"/></svg>
<div style="left:73.3px;top:546.608px;width:3px;height:3px;background:#111;border-radius:1px;"></div>
<span style="top:539.708px;line-height:16px;font-size:10.4px;color:#111;letter-spacing:0.176px;left:86.8px;">Empresa DEMO 9</span>
<div style="left:49px;top:563px;width:6px;height:1px;background:repeating-linear-gradient(90deg,#b5b5b5 0 1px,transparent 1px 2px);"></div>
<svg style="left:40px;top:559px;" width="9" height="9" viewBox="0 0 9 9"><rect x=".5" y=".5" width="8" height="8" rx="1" fill="#fff" stroke="#a9a9b4"/><path d="M2.500 4.500h4" stroke="#3a4a9a" stroke-width="1"/><path d="M4.500 2.500v4" stroke="#3a4a9a" stroke-width="1"/></svg>
<svg style="left:54.5px;top:557px;" width="12.5" height="12.5" viewBox="0 0 12.5 12.5"><rect width="12.500" height="12.500" rx="2" fill="#0a5bc4"/><path d="M3.2 6.500l2.300 2.300 4-4.600" stroke="#fff" stroke-width="1.200" fill="none"/></svg>
<div style="left:73.3px;top:561.694px;width:3px;height:3px;background:#111;border-radius:1px;"></div>
<span style="top:554.794px;line-height:16px;font-size:10.4px;color:#111;letter-spacing:0.176px;left:86.8px;">Empresa DEMO 6</span>
<div style="left:49px;top:578px;width:6px;height:1px;background:repeating-linear-gradient(90deg,#b5b5b5 0 1px,transparent 1px 2px);"></div>
<svg style="left:40px;top:574px;" width="9" height="9" viewBox="0 0 9 9"><rect x=".5" y=".5" width="8" height="8" rx="1" fill="#fff" stroke="#a9a9b4"/><path d="M2.500 4.500h4" stroke="#3a4a9a" stroke-width="1"/><path d="M4.500 2.500v4" stroke="#3a4a9a" stroke-width="1"/></svg>
<svg style="left:54.5px;top:572px;" width="12.5" height="12.5" viewBox="0 0 12.5 12.5"><rect width="12.500" height="12.500" rx="2" fill="#0a5bc4"/><path d="M3.2 6.500l2.300 2.300 4-4.600" stroke="#fff" stroke-width="1.200" fill="none"/></svg>
<div style="left:73.3px;top:576.78px;width:3px;height:3px;background:#111;border-radius:1px;"></div>
<span style="top:569.88px;line-height:16px;font-size:10.4px;color:#111;letter-spacing:0.176px;left:86.8px;">Empresa DEMO 9</span>
<div style="left:49px;top:593px;width:6px;height:1px;background:repeating-linear-gradient(90deg,#b5b5b5 0 1px,transparent 1px 2px);"></div>
<svg style="left:40px;top:589px;" width="9" height="9" viewBox="0 0 9 9"><rect x=".5" y=".5" width="8" height="8" rx="1" fill="#fff" stroke="#a9a9b4"/><path d="M2.500 4.500h4" stroke="#3a4a9a" stroke-width="1"/><path d="M4.500 2.500v4" stroke="#3a4a9a" stroke-width="1"/></svg>
<svg style="left:54.5px;top:587px;" width="12.5" height="12.5" viewBox="0 0 12.5 12.5"><rect width="12.500" height="12.500" rx="2" fill="#0a5bc4"/><path d="M3.2 6.500l2.300 2.300 4-4.600" stroke="#fff" stroke-width="1.200" fill="none"/></svg>
<div style="left:73.3px;top:591.866px;width:3px;height:3px;background:#111;border-radius:1px;"></div>
<span style="top:584.966px;line-height:16px;font-size:10.4px;color:#111;letter-spacing:0.176px;left:86.8px;">Empresa DEMO 6</span>
<div style="left:49px;top:608px;width:6px;height:1px;background:repeating-linear-gradient(90deg,#b5b5b5 0 1px,transparent 1px 2px);"></div>
<svg style="left:40px;top:604px;" width="9" height="9" viewBox="0 0 9 9"><rect x=".5" y=".5" width="8" height="8" rx="1" fill="#fff" stroke="#a9a9b4"/><path d="M2.500 4.500h4" stroke="#3a4a9a" stroke-width="1"/><path d="M4.500 2.500v4" stroke="#3a4a9a" stroke-width="1"/></svg>
<svg style="left:54.5px;top:602px;" width="12.5" height="12.5" viewBox="0 0 12.5 12.5"><rect width="12.500" height="12.500" rx="2" fill="#0a5bc4"/><path d="M3.2 6.500l2.300 2.300 4-4.600" stroke="#fff" stroke-width="1.200" fill="none"/></svg>
<div style="left:73.3px;top:606.952px;width:3px;height:3px;background:#111;border-radius:1px;"></div>
<span style="top:600.052px;line-height:16px;font-size:10.4px;color:#111;letter-spacing:0.176px;left:86.8px;">Empresa DEMO 9</span>
<div style="left:49px;top:623px;width:6px;height:1px;background:repeating-linear-gradient(90deg,#b5b5b5 0 1px,transparent 1px 2px);"></div>
<svg style="left:40px;top:619px;" width="9" height="9" viewBox="0 0 9 9"><rect x=".5" y=".5" width="8" height="8" rx="1" fill="#fff" stroke="#a9a9b4"/><path d="M2.500 4.500h4" stroke="#3a4a9a" stroke-width="1"/><path d="M4.500 2.500v4" stroke="#3a4a9a" stroke-width="1"/></svg>
<svg style="left:54.5px;top:617px;" width="12.5" height="12.5" viewBox="0 0 12.5 12.5"><rect width="12.500" height="12.500" rx="2" fill="#0a5bc4"/><path d="M3.2 6.500l2.300 2.300 4-4.600" stroke="#fff" stroke-width="1.200" fill="none"/></svg>
<div style="left:73.3px;top:622.038px;width:3px;height:3px;background:#111;border-radius:1px;"></div>
<span style="top:615.138px;line-height:16px;font-size:10.4px;color:#111;letter-spacing:0.176px;left:86.8px;">Empresa DEMO 8</span>
<div style="left:49px;top:638px;width:6px;height:1px;background:repeating-linear-gradient(90deg,#b5b5b5 0 1px,transparent 1px 2px);"></div>
<svg style="left:40px;top:634px;" width="9" height="9" viewBox="0 0 9 9"><rect x=".5" y=".5" width="8" height="8" rx="1" fill="#fff" stroke="#a9a9b4"/><path d="M2.500 4.500h4" stroke="#3a4a9a" stroke-width="1"/><path d="M4.500 2.500v4" stroke="#3a4a9a" stroke-width="1"/></svg>
<svg style="left:54.5px;top:632px;" width="12.5" height="12.5" viewBox="0 0 12.5 12.5"><rect width="12.500" height="12.500" rx="2" fill="#0a5bc4"/><path d="M3.2 6.500l2.300 2.300 4-4.600" stroke="#fff" stroke-width="1.200" fill="none"/></svg>
<div style="left:73.3px;top:637.124px;width:3px;height:3px;background:#111;border-radius:1px;"></div>
<span style="top:630.224px;line-height:16px;font-size:10.4px;color:#111;letter-spacing:0.176px;left:86.8px;">Empresa DEMO 9</span>
<div style="left:49px;top:653px;width:6px;height:1px;background:repeating-linear-gradient(90deg,#b5b5b5 0 1px,transparent 1px 2px);"></div>
<svg style="left:40px;top:649px;" width="9" height="9" viewBox="0 0 9 9"><rect x=".5" y=".5" width="8" height="8" rx="1" fill="#fff" stroke="#a9a9b4"/><path d="M2.500 4.500h4" stroke="#3a4a9a" stroke-width="1"/><path d="M4.500 2.500v4" stroke="#3a4a9a" stroke-width="1"/></svg>
<svg style="left:54.5px;top:647px;" width="12.5" height="12.5" viewBox="0 0 12.5 12.5"><rect width="12.500" height="12.500" rx="2" fill="#0a5bc4"/><path d="M3.2 6.500l2.300 2.300 4-4.600" stroke="#fff" stroke-width="1.200" fill="none"/></svg>
<div style="left:73.3px;top:652.21px;width:3px;height:3px;background:#111;border-radius:1px;"></div>
<span style="top:645.31px;line-height:16px;font-size:10.4px;color:#111;letter-spacing:0.176px;left:86.8px;">Empresa DEMO 9</span>
<div style="left:49px;top:668px;width:6px;height:1px;background:repeating-linear-gradient(90deg,#b5b5b5 0 1px,transparent 1px 2px);"></div>
<svg style="left:40px;top:664px;" width="9" height="9" viewBox="0 0 9 9"><rect x=".5" y=".5" width="8" height="8" rx="1" fill="#fff" stroke="#a9a9b4"/><path d="M2.500 4.500h4" stroke="#3a4a9a" stroke-width="1"/><path d="M4.500 2.500v4" stroke="#3a4a9a" stroke-width="1"/></svg>
<svg style="left:54.5px;top:662px;" width="12.5" height="12.5" viewBox="0 0 12.5 12.5"><rect width="12.500" height="12.500" rx="2" fill="#0a5bc4"/><path d="M3.2 6.500l2.300 2.300 4-4.600" stroke="#fff" stroke-width="1.200" fill="none"/></svg>
<div style="left:73.3px;top:667.296px;width:3px;height:3px;background:#111;border-radius:1px;"></div>
<span style="top:660.396px;line-height:16px;font-size:10.4px;color:#111;letter-spacing:0.176px;left:86.8px;">Empresa DEMO 5</span>
<div style="left:32px;top:672px;width:227px;height:1px;background:#868c96;"></div>
<div style="left:33px;top:673px;width:226px;height:5px;background:#f0f0f0;"></div>
<div style="left:32px;top:677.3px;width:227px;height:100.7px;background:#fff;border:1px solid #5f5f5f;"></div>
<svg style="left:38.5px;top:688.5px;" width="18" height="18" viewBox="0 0 20 20"><circle cx="10" cy="10" r="9" fill="#e8dcf4" stroke="#79b89a" stroke-width="2.2"/><path d="M10 10l3.4-2.4M10 10l2 3" stroke="#8a7fb8" stroke-width="1.2"/><circle cx="10" cy="10" r=".9" fill="#8a7fb8"/></svg>
<span style="top:681.6px;line-height:16px;font-size:10.4px;color:#111;letter-spacing:0.132px;left:64.3px;">Busca automática na SEFAZ</span>
<div style="left:61px;top:700px;width:189.5px;height:18.5px;background:#fff;border:1px solid #c8c8c8;border-radius:2px;"></div>
<span style="top:701.2px;line-height:16px;font-size:10.4px;color:#111;letter-spacing:0.096px;left:65.5px;">Buscar manualmente</span>
<svg style="left:238.5px;top:706.5px;" width="9" height="6" viewBox="0 0 9 6"><path d="M.6.800l3.900 3.900L8.400.800" stroke="#6a6a6a" stroke-width="1.100" fill="none"/></svg>
<div style="left:38px;top:725px;width:214px;height:1px;background:#cfcfcf;"></div>
<svg style="left:37.5px;top:733px;" width="19" height="19" viewBox="0 0 20 20"><g transform="translate(9 9)"><g fill="#f6c21a"><rect x="-2" y="-9" width="4" height="5" rx="1" transform="rotate(0)"/><rect x="-2" y="-9" width="4" height="5" rx="1" transform="rotate(45)"/><rect x="-2" y="-9" width="4" height="5" rx="1" transform="rotate(90)"/><rect x="-2" y="-9" width="4" height="5" rx="1" transform="rotate(135)"/><rect x="-2" y="-9" width="4" height="5" rx="1" transform="rotate(180)"/><rect x="-2" y="-9" width="4" height="5" rx="1" transform="rotate(225)"/><rect x="-2" y="-9" width="4" height="5" rx="1" transform="rotate(270)"/><rect x="-2" y="-9" width="4" height="5" rx="1" transform="rotate(315)"/><circle r="6.6"/></g><circle r="3" fill="#fff"/></g><circle cx="14.6" cy="15" r="4.6" fill="#2fbf5a" stroke="#fff" stroke-width=".8"/><path d="M12.5 15.1l1.5 1.5 2.7-2.9" stroke="#fff" stroke-width="1.3" fill="none"/></svg>
<span style="top:733.7px;line-height:16px;font-size:10.4px;color:#1818f4;letter-spacing:0.246px;left:63.2px;text-decoration:underline;">Integração: enviar e receber XML</span>
<svg style="left:37.5px;top:754px;" width="19" height="19" viewBox="0 0 20 20"><circle cx="10" cy="10" r="8.8" fill="#eaf3fb" stroke="#2d3540" stroke-width="1.9"/><path d="M10 5v5.4" stroke="#2d3540" stroke-width="1.4"/><circle cx="10" cy="10.2" r="1.1" fill="#2d3540"/><path d="M10 2.6v1M10 16.4v1M2.6 10h1M16.4 10h1" stroke="#6a7480" stroke-width=".8"/></svg>
<span style="top:755.7px;line-height:16px;font-size:10.4px;color:#1818f4;letter-spacing:0.315px;left:63.2px;text-decoration:underline;">Gerenciar Tarefas</span>
<svg style="left:43px;top:782.5px;" width="19" height="16" viewBox="0 0 20 17"><path d="M.4 2.600L4 1l2.600 8.600-3.400 1.600z" fill="#d8324a"/><path d="M19.600 2.600L16 1l-2.600 8.600 3.400 1.600z" fill="#2a66d0"/><path d="M4.600 3.600l4.600-1.200 2.400.8 4-.6 1.200 6-2.200 3-3.400 3.200-2 .6-2.800-1.400-3.600-3.800z" fill="#e9a57a"/><path d="M9.400 3.200l3.200 1 2.600 3.600-1.400 1.200-3-2.600-2.600 2-1.600-1.200z" fill="#c77a4c"/><path d="M6.600 10.400l2.200 2.400M8.400 9.400l2.400 2.600M10.400 8.400l2.400 2.600" stroke="#8a4a28" stroke-width=".9"/></svg>
<span style="top:782.5px;line-height:16px;font-size:10.4px;color:#1818f4;letter-spacing:0.227px;left:65px;text-decoration:underline;">Termos e condições de uso</span>
<div style="left:262px;top:87px;width:996px;height:26px;background:linear-gradient(#ffffff,#f6f6f6 55%,#ebebeb);border-radius:5px 5px 0 0;"></div>
<svg style="left:267px;top:91px;" width="19.5" height="19.5" viewBox="0 0 20 20"><path d="M3.600 1.500h11.800a2.200 2.200 0 0 1 2.200 2.200v7M9.500 16.300H3.600a2.200 2.200 0 0 1-2.200-2.200V3.700a2.200 2.200 0 0 1 2.200-2.200" fill="none" stroke="#1c1c1c" stroke-width="1.700"/><path d="M2.600 2.300h13.800" stroke="#1c1c1c" stroke-width="2.400"/><g stroke="#1c1c1c" stroke-width="1.300" stroke-linecap="round"><path d="M4.600 6.900h.2M7 6.900h6.600M4.600 9.800h.2M7 9.800h6.600M4.600 12.700h.2M7 12.700h3"/></g><path d="M9.500 16.100Q14.500 9 19.500 16.100Q14.500 23.200 9.500 16.100z" fill="#1c1c1c" stroke="#fff" stroke-width="1"/><circle cx="14.500" cy="16.100" r="1.800" fill="#fff"/><circle cx="15.100" cy="15.500" r="1" fill="#1c1c1c"/></svg>
<div style="left:291.5px;top:93.5px;width:1px;height:12px;background:#c6c6c6;"></div>
<svg style="left:296px;top:92px;" width="18.5" height="18" viewBox="0 0 20 20"><rect x=".5" y="2" width="19" height="16" rx="1" fill="#f4f4f4"/><rect x="1.5" y="3" width="1.2" height="14" fill="#222"/><rect x="3.6" y="3" width="2.2" height="14" fill="#222"/><rect x="6.8" y="3" width="1" height="14" fill="#222"/><rect x="8.6" y="3" width="2" height="14" fill="#222"/><rect x="11.6" y="3" width="1.2" height="14" fill="#222"/><rect x="13.6" y="3" width="2.2" height="14" fill="#222"/><rect x="16.6" y="3" width="1" height="14" fill="#222"/><rect x="18" y="3" width="0.8" height="14" fill="#222"/></svg>
<span style="top:92.7px;line-height:16px;font-size:10.4px;color:#111;letter-spacing:0.32px;left:318.4px;">Chaves</span>
<div style="left:367px;top:93.5px;width:1px;height:12px;background:#c6c6c6;"></div>
<span style="top:91.2px;line-height:16px;font-size:10.4px;color:#111;letter-spacing:0.243px;left:372.5px;">Busca :</span>
<div style="left:417px;top:89px;width:198px;height:19.5px;background:#ffffe1;"></div>
<svg style="left:617.5px;top:91.5px;" width="19" height="19" viewBox="0 0 20 20"><circle cx="10" cy="10" r="9.5" fill="#1aa6c8"/><circle cx="10" cy="10" r="9.5" fill="none" stroke="#58c8de" stroke-width="1"/><text x="10" y="15.2" font-size="15" font-weight="bold" font-family="Liberation Sans,sans-serif" text-anchor="middle" fill="#fff">?</text></svg>
<div style="left:641.5px;top:93.5px;width:1px;height:12px;background:#c6c6c6;"></div>
<div style="left:645px;top:89.5px;width:74px;height:18px;background:#ffffe1;"></div>
<span style="top:91.2px;line-height:16px;font-size:10.4px;color:#111;letter-spacing:0.08px;left:649px;">Autorização</span>
<svg style="left:722.8px;top:98.1px;" width="5.4" height="3.4" viewBox="0 0 5.4 3.4"><path d="M0 0h5.400L2.700 3.200z" fill="#111"/></svg>
<div style="left:733.5px;top:89.5px;width:79.5px;height:18px;background:#ffffe1;"></div>
<span style="top:90.5px;line-height:16px;font-size:10.4px;color:#111;letter-spacing:0.184px;left:742px;">27/12/2020</span>
<span style="top:88.9px;line-height:16px;font-size:10.4px;color:#111;letter-spacing:-0.325px;left:817.4px;">até</span>
<div style="left:838.5px;top:89.5px;width:80px;height:18px;background:#ffffe1;"></div>
<span style="top:90.5px;line-height:16px;font-size:10.4px;color:#111;letter-spacing:0.117px;left:847.8px;">31/12/2023</span>
<div style="left:922.5px;top:93.5px;width:1px;height:12px;background:#c6c6c6;"></div>
<svg style="left:927px;top:92.4px;" width="18.5" height="17.5" viewBox="0 0 19 18"><path d="M15.400 8.400A6.600 6.600 0 1 0 12.600 14.300" fill="none" stroke="#6fa55c" stroke-width="3.800"/><path d="M15.400 8.400A6.600 6.600 0 1 0 12.600 14.300" fill="none" stroke="#abd98e" stroke-width="2.200"/><path d="M11.800 8.300h6.800l-3.400 4.800z" fill="#eef8e8" stroke="#6fa55c" stroke-width="1.100"/></svg>
<div style="left:951px;top:93.5px;width:1px;height:12px;background:#c6c6c6;"></div>
<svg style="left:955.5px;top:91.5px;" width="19" height="19" viewBox="0 0 20 20"><g stroke="#0c0c0c" stroke-width="1.900" fill="none" stroke-linecap="round" stroke-linejoin="round"><g transform="rotate(0 10 10)"><path d="M10 .8v6.800M6.600 4.200L10 7.600l3.400-3.400"/></g><g transform="rotate(90 10 10)"><path d="M10 .8v6.800M6.600 4.200L10 7.600l3.400-3.400"/></g><g transform="rotate(180 10 10)"><path d="M10 .8v6.800M6.600 4.200L10 7.600l3.400-3.400"/></g><g transform="rotate(270 10 10)"><path d="M10 .8v6.800M6.600 4.200L10 7.600l3.400-3.400"/></g></g></svg>
<div style="left:979.5px;top:93.5px;width:1px;height:12px;background:#c6c6c6;"></div>
<svg style="left:986px;top:94px;" width="15" height="15" viewBox="0 0 15 15"><g transform="rotate(0 7.500 7.500)"><path d="M.2.200h4.600L.2 4.800z" fill="#1e90ff"/><path d="M1.800 1.800l3.200 3.200" stroke="#1e90ff" stroke-width="1.700" stroke-linecap="round"/></g><g transform="rotate(90 7.500 7.500)"><path d="M.2.200h4.600L.2 4.800z" fill="#1e90ff"/><path d="M1.800 1.800l3.200 3.200" stroke="#1e90ff" stroke-width="1.700" stroke-linecap="round"/></g><g transform="rotate(180 7.500 7.500)"><path d="M.2.200h4.600L.2 4.800z" fill="#1e90ff"/><path d="M1.800 1.800l3.200 3.200" stroke="#1e90ff" stroke-width="1.700" stroke-linecap="round"/></g><g transform="rotate(270 7.500 7.500)"><path d="M.2.200h4.600L.2 4.800z" fill="#1e90ff"/><path d="M1.800 1.800l3.200 3.200" stroke="#1e90ff" stroke-width="1.700" stroke-linecap="round"/></g></svg>
<svg style="left:1006px;top:91.3px;" width="19.5" height="19.5" viewBox="0 0 20 20"><path d="M3.600 1.500h11.800a2.200 2.200 0 0 1 2.200 2.200v7M9.500 16.300H3.600a2.200 2.200 0 0 1-2.200-2.200V3.700a2.200 2.200 0 0 1 2.200-2.200" fill="none" stroke="#1c1c1c" stroke-width="1.700"/><path d="M2.600 2.300h13.800" stroke="#1c1c1c" stroke-width="2.400"/><g stroke="#1c1c1c" stroke-width="1.300" stroke-linecap="round"><path d="M4.600 6.900h.2M7 6.900h6.600M4.600 9.800h.2M7 9.800h6.600M4.600 12.700h.2M7 12.700h3"/></g><path d="M9.500 16.100Q14.500 9 19.500 16.100Q14.500 23.200 9.500 16.100z" fill="#1c1c1c" stroke="#fff" stroke-width="1"/><circle cx="14.500" cy="16.100" r="1.800" fill="#fff"/><circle cx="15.100" cy="15.500" r="1" fill="#1c1c1c"/></svg>
<div style="left:263.5px;top:118.5px;width:167px;height:20px;background:#dff3c4;border:1px solid #a6a6a6;border-bottom:none;border-radius:5px 3px 0 0;"></div>
<svg style="left:270px;top:121.5px;" width="14.5" height="14.5" viewBox="0 0 20 20"><rect x="1.2" y="1" width="10.6" height="16.6" rx="1.6" fill="#fff" stroke="#1a1ad0" stroke-width="1.7"/><path d="M3.4 6.4h6.2M3.4 9.4h6.2M3.4 12.4h3" stroke="#f08a24" stroke-width="1.6"/><rect x="9.6" y="9.8" width="8.8" height="8.4" fill="#fff4e0" stroke="#f08a24" stroke-width="1.2"/><path d="M9.6 13h8.8M9.6 15.8h8.8M13.8 9.8v8.4" stroke="#f08a24" stroke-width="1"/><rect x="14.6" y="13.6" width="2.4" height="1.8" fill="#e03a3a"/></svg>
<span style="top:119.7px;line-height:16px;font-size:10.4px;color:#111;letter-spacing:0.136px;left:287.8px;">Emitidos por terceiros</span>
<span style="top:119.7px;line-height:16px;font-size:10.4px;color:#111;font-weight:bold;left:416.5px;">X</span>
<div style="left:430px;top:118.5px;width:173.5px;height:20px;background:#f7f7f7;border:1px solid #a6a6a6;border-bottom:none;border-radius:5px 5px 0 0;"></div>
<svg style="left:436px;top:121.5px;" width="14.5" height="14.5" viewBox="0 0 20 20"><rect x="1.2" y="1" width="10.6" height="16.6" rx="1.6" fill="#fff" stroke="#1a1ad0" stroke-width="1.7"/><path d="M3.4 6.4h6.2M3.4 9.4h6.2M3.4 12.4h3" stroke="#f08a24" stroke-width="1.6"/><rect x="9.6" y="9.8" width="8.8" height="8.4" fill="#fff4e0" stroke="#f08a24" stroke-width="1.2"/><path d="M9.6 13h8.8M9.6 15.8h8.8M13.8 9.8v8.4" stroke="#f08a24" stroke-width="1"/><rect x="14.6" y="13.6" width="2.4" height="1.8" fill="#e03a3a"/></svg>
<span style="top:119.7px;line-height:16px;font-size:10.4px;color:#111;letter-spacing:0.126px;left:454.3px;">Emitidos pela empresa</span>
<span style="top:119.7px;line-height:16px;font-size:10.4px;color:#111;font-weight:bold;left:589.5px;">X</span>
<div style="left:263.5px;top:137.5px;width:994px;height:642.5px;background:#e3f3cf;border:1px solid #a3ad98;"></div>
<div style="left:265.5px;top:140px;width:990px;height:637.5px;background:#fff;border:1px solid #7d8577;"></div>
<div style="left:1239px;top:141px;width:15.5px;height:619px;background:#f1f1f1;"></div>
<div style="left:1246px;top:156.5px;width:2px;height:15.5px;background:#7a7a7a;"></div>
<div style="left:298px;top:163px;width:33px;height:500px;background:#f0f0ff;"></div>
<div style="left:271.5px;top:143.5px;width:12.5px;height:12.5px;background:#fff;border:1px solid #6e6e6e;border-radius:3px;"></div>
<div style="left:296.3px;top:141px;width:1px;height:21.5px;background:#e3e3e3;"></div>
<div style="left:330.5px;top:141px;width:1px;height:21.5px;background:#e3e3e3;"></div>
<div style="left:400px;top:141px;width:1px;height:21.5px;background:#e3e3e3;"></div>
<div style="left:441.5px;top:141px;width:1px;height:21.5px;background:#e3e3e3;"></div>
<div style="left:503.5px;top:141px;width:1px;height:21.5px;background:#e3e3e3;"></div>
<div style="left:698.5px;top:141px;width:1px;height:21.5px;background:#e3e3e3;"></div>
<div style="left:842.5px;top:141px;width:1px;height:21.5px;background:#e3e3e3;"></div>
<div style="left:914.5px;top:141px;width:1px;height:21.5px;background:#e3e3e3;"></div>
<div style="left:1015.5px;top:141px;width:1px;height:21.5px;background:#e3e3e3;"></div>
<div style="left:300px;top:142px;width:13.500px;height:17px;overflow:hidden;"><span style="left:-2.200px;top:-0.300px;font-size:10.400px;line-height:16px;color:#111;">C...</span></div>
<svg style="left:313.5px;top:146.5px;" width="10.5" height="6" viewBox="0 0 10.5 6"><path d="M0 0h10.500L5.250 6z" fill="#5a6270"/></svg>
<span style="top:142px;line-height:16px;font-size:10.4px;color:#111;left:65.5px;width:600px;text-align:center;">Num</span>
<span style="top:142px;line-height:16px;font-size:10.4px;color:#111;left:120.8px;width:600px;text-align:center;">Serie</span>
<span style="top:142px;line-height:16px;font-size:10.4px;color:#111;letter-spacing:0.204px;left:447px;">Tipo</span>
<span style="top:142px;line-height:16px;font-size:10.4px;color:#111;left:301px;width:600px;text-align:center;">Etiq</span>
<span style="top:142px;line-height:16px;font-size:10.4px;color:#111;left:470.5px;width:600px;text-align:center;">DtAut</span>
<span style="top:142px;line-height:16px;font-size:10.4px;color:#111;left:578.5px;width:600px;text-align:center;">Valor</span>
<span style="top:142px;line-height:16px;font-size:10.4px;color:#111;left:665px;width:600px;text-align:center;">Venc.</span>
<span style="top:142px;line-height:16px;font-size:10.4px;color:#111;left:852.5px;width:600px;text-align:center;">Status</span>
<span style="top:163.7px;line-height:16px;font-size:10.39px;color:#1e3a9a;font-family:'Liberation Sans',sans-serif;left:277.7px;">2023.02 [20 items]</span>
<div style="left:370px;top:171px;width:868px;height:1px;background:#dfe6f5;"></div>
<div style="left:272.5px;top:184px;width:12.5px;height:12.5px;background:#fff;border:1px solid #6e6e6e;border-radius:3px;"></div>
<svg style="left:307px;top:183.2px;" width="14" height="14" viewBox="0 0 20 20"><circle cx="10" cy="10" r="9.3" fill="#52b064"/><text x="10" y="12.4" font-size="6.6" font-weight="bold" font-family="Liberation Sans,sans-serif" text-anchor="middle" fill="#dff3e2">XML</text></svg>
<span style="top:182.4px;line-height:16px;font-size:10.4px;color:#a0289a;letter-spacing:-0.144px;left:336.2px;">000000025</span>
<span style="top:182.4px;line-height:16px;font-size:10.4px;color:#111;left:120.5px;width:600px;text-align:center;">1</span>
<span style="top:182.4px;line-height:16px;font-size:10.4px;color:#111;left:446px;">CTe</span>
<div style="left:504px;top:182px;width:194.5px;height:16px;background:#9fe8c8;"></div>
<span style="top:182.4px;line-height:16px;font-size:10.4px;color:#111;left:507.5px;">Nota Lançada</span>
<span style="top:182.4px;line-height:16px;font-size:10.4px;color:#111;letter-spacing:-0.039px;left:740.5px;">2023.02.08</span>
<span style="top:182.4px;line-height:16px;font-size:10.4px;color:#111;right:631px;">283,03</span>
<span style="top:182.4px;line-height:16px;font-size:10.4px;color:#111;letter-spacing:-0.005px;left:935px;">2023.03.10</span>
<svg style="left:1017.8px;top:182.9px;" width="12.5" height="14.5" viewBox="0 0 20 20"><path d="M2 1v18" stroke="#222" stroke-width="1.6"/><rect x="3" y="2" width="14" height="11" fill="#fff" stroke="#222" stroke-width=".6"/><rect x="3.0" y="2.0" width="3.5" height="2.75" fill="#1a1a1a"/><rect x="3.0" y="7.5" width="3.5" height="2.75" fill="#1a1a1a"/><rect x="6.5" y="4.75" width="3.5" height="2.75" fill="#1a1a1a"/><rect x="6.5" y="10.25" width="3.5" height="2.75" fill="#1a1a1a"/><rect x="10.0" y="2.0" width="3.5" height="2.75" fill="#1a1a1a"/><rect x="10.0" y="7.5" width="3.5" height="2.75" fill="#1a1a1a"/><rect x="13.5" y="4.75" width="3.5" height="2.75" fill="#1a1a1a"/><rect x="13.5" y="10.25" width="3.5" height="2.75" fill="#1a1a1a"/></svg>
<svg style="left:1030.3px;top:183.4px;" width="12.5" height="14" viewBox="0 0 20 20"><rect x="6.4" y="1" width="7.4" height="6" fill="#f6a21e"/><rect x="3" y="6.4" width="9" height="5.4" fill="#f08a12"/><path d="M2.4 11.4h13.8l2.4 2.4v3.2H2.4z" fill="#1c4fb8"/><circle cx="6" cy="16.6" r="2.3" fill="#222"/><circle cx="15" cy="16.6" r="2.3" fill="#222"/><path d="M7.4 2h5.4v2.2H7.4z" fill="#d85a5a"/></svg>
<div style="left:272.5px;top:201px;width:12.5px;height:12.5px;background:#fff;border:1px solid #6e6e6e;border-radius:3px;"></div>
<svg style="left:307px;top:200.15px;" width="14" height="14" viewBox="0 0 20 20"><circle cx="10" cy="10" r="9.3" fill="#52b064"/><text x="10" y="12.4" font-size="6.6" font-weight="bold" font-family="Liberation Sans,sans-serif" text-anchor="middle" fill="#dff3e2">XML</text></svg>
<span style="top:199.35px;line-height:16px;font-size:10.4px;color:#2a2af0;letter-spacing:-0.144px;left:336.2px;">000021333</span>
<span style="top:199.35px;line-height:16px;font-size:10.4px;color:#111;left:120.5px;width:600px;text-align:center;">1</span>
<span style="top:199.35px;line-height:16px;font-size:10.4px;color:#111;left:446px;">CTe</span>
<span style="top:199.35px;line-height:16px;font-size:10.4px;color:#111;letter-spacing:-0.039px;left:740.5px;">2023.02.08</span>
<span style="top:199.35px;line-height:16px;font-size:10.4px;color:#111;right:631px;">39,00</span>
<svg style="left:1017.8px;top:199.85px;" width="12.5" height="14.5" viewBox="0 0 20 20"><path d="M2 1v18" stroke="#222" stroke-width="1.6"/><rect x="3" y="2" width="14" height="11" fill="#fff" stroke="#222" stroke-width=".6"/><rect x="3.0" y="2.0" width="3.5" height="2.75" fill="#1a1a1a"/><rect x="3.0" y="7.5" width="3.5" height="2.75" fill="#1a1a1a"/><rect x="6.5" y="4.75" width="3.5" height="2.75" fill="#1a1a1a"/><rect x="6.5" y="10.25" width="3.5" height="2.75" fill="#1a1a1a"/><rect x="10.0" y="2.0" width="3.5" height="2.75" fill="#1a1a1a"/><rect x="10.0" y="7.5" width="3.5" height="2.75" fill="#1a1a1a"/><rect x="13.5" y="4.75" width="3.5" height="2.75" fill="#1a1a1a"/><rect x="13.5" y="10.25" width="3.5" height="2.75" fill="#1a1a1a"/></svg>
<svg style="left:1030.3px;top:200.35px;" width="12.5" height="14" viewBox="0 0 20 20"><rect x="6.4" y="1" width="7.4" height="6" fill="#f6a21e"/><rect x="3" y="6.4" width="9" height="5.4" fill="#f08a12"/><path d="M2.4 11.4h13.8l2.4 2.4v3.2H2.4z" fill="#1c4fb8"/><circle cx="6" cy="16.6" r="2.3" fill="#222"/><circle cx="15" cy="16.6" r="2.3" fill="#222"/><path d="M7.4 2h5.4v2.2H7.4z" fill="#d85a5a"/></svg>
<div style="left:272.5px;top:218px;width:12.5px;height:12.5px;background:#fff;border:1px solid #6e6e6e;border-radius:3px;"></div>
<span style="top:216.3px;line-height:16px;font-size:10.4px;color:#a0289a;letter-spacing:-0.144px;left:336.2px;">000000015</span>
<span style="top:216.3px;line-height:16px;font-size:10.4px;color:#111;left:120.5px;width:600px;text-align:center;">1</span>
<span style="top:216.3px;line-height:16px;font-size:10.4px;color:#111;left:446px;">NFe</span>
<div style="left:504px;top:216px;width:194.5px;height:16px;background:#989dcc;"></div>
<span style="top:216.3px;line-height:16px;font-size:10.4px;color:#111;left:507.5px;">Nota Arquivada</span>
<span style="top:216.3px;line-height:16px;font-size:10.4px;color:#111;letter-spacing:-0.039px;left:740.5px;">2023.02.08</span>
<span style="top:216.3px;line-height:16px;font-size:10.4px;color:#111;right:631px;">45650,00</span>
<svg style="left:1017.8px;top:216.8px;" width="12.5" height="14.5" viewBox="0 0 20 20"><path d="M2 1v18" stroke="#222" stroke-width="1.6"/><rect x="3" y="2" width="14" height="11" fill="#fff" stroke="#222" stroke-width=".6"/><rect x="3.0" y="2.0" width="3.5" height="2.75" fill="#1a1a1a"/><rect x="3.0" y="7.5" width="3.5" height="2.75" fill="#1a1a1a"/><rect x="6.5" y="4.75" width="3.5" height="2.75" fill="#1a1a1a"/><rect x="6.5" y="10.25" width="3.5" height="2.75" fill="#1a1a1a"/><rect x="10.0" y="2.0" width="3.5" height="2.75" fill="#1a1a1a"/><rect x="10.0" y="7.5" width="3.5" height="2.75" fill="#1a1a1a"/><rect x="13.5" y="4.75" width="3.5" height="2.75" fill="#1a1a1a"/><rect x="13.5" y="10.25" width="3.5" height="2.75" fill="#1a1a1a"/></svg>
<div style="left:272.5px;top:235px;width:12.5px;height:12.5px;background:#fff;border:1px solid #6e6e6e;border-radius:3px;"></div>
<svg style="left:307px;top:234.05px;" width="14" height="14" viewBox="0 0 20 20"><circle cx="10" cy="10" r="9.3" fill="#52b064"/><text x="10" y="12.4" font-size="6.6" font-weight="bold" font-family="Liberation Sans,sans-serif" text-anchor="middle" fill="#dff3e2">XML</text></svg>
<span style="top:233.25px;line-height:16px;font-size:10.4px;color:#2a2af0;letter-spacing:-0.144px;left:336.2px;">000089315</span>
<span style="top:233.25px;line-height:16px;font-size:10.4px;color:#111;left:120.5px;width:600px;text-align:center;">1</span>
<span style="top:233.25px;line-height:16px;font-size:10.4px;color:#111;left:446px;">CTe</span>
<div style="left:504px;top:233px;width:194.5px;height:16px;background:#ffa3a3;"></div>
<span style="top:233.25px;line-height:16px;font-size:10.4px;color:#111;left:507.5px;">Nota com erro fiscal</span>
<span style="top:233.25px;line-height:16px;font-size:10.4px;color:#111;letter-spacing:-0.039px;left:740.5px;">2023.02.08</span>
<span style="top:233.25px;line-height:16px;font-size:10.4px;color:#111;right:631px;">0,10</span>
<svg style="left:1017.8px;top:233.75px;" width="12.5" height="14.5" viewBox="0 0 20 20"><path d="M2 1v18" stroke="#222" stroke-width="1.6"/><rect x="3" y="2" width="14" height="11" fill="#fff" stroke="#222" stroke-width=".6"/><rect x="3.0" y="2.0" width="3.5" height="2.75" fill="#1a1a1a"/><rect x="3.0" y="7.5" width="3.5" height="2.75" fill="#1a1a1a"/><rect x="6.5" y="4.75" width="3.5" height="2.75" fill="#1a1a1a"/><rect x="6.5" y="10.25" width="3.5" height="2.75" fill="#1a1a1a"/><rect x="10.0" y="2.0" width="3.5" height="2.75" fill="#1a1a1a"/><rect x="10.0" y="7.5" width="3.5" height="2.75" fill="#1a1a1a"/><rect x="13.5" y="4.75" width="3.5" height="2.75" fill="#1a1a1a"/><rect x="13.5" y="10.25" width="3.5" height="2.75" fill="#1a1a1a"/></svg>
<svg style="left:1030.3px;top:234.25px;" width="12.5" height="14" viewBox="0 0 20 20"><rect x="6.4" y="1" width="7.4" height="6" fill="#f6a21e"/><rect x="3" y="6.4" width="9" height="5.4" fill="#f08a12"/><path d="M2.4 11.4h13.8l2.4 2.4v3.2H2.4z" fill="#1c4fb8"/><circle cx="6" cy="16.6" r="2.3" fill="#222"/><circle cx="15" cy="16.6" r="2.3" fill="#222"/><path d="M7.4 2h5.4v2.2H7.4z" fill="#d85a5a"/></svg>
<div style="left:272.5px;top:252px;width:12.5px;height:12.5px;background:#fff;border:1px solid #6e6e6e;border-radius:3px;"></div>
<svg style="left:307px;top:251px;" width="14" height="14" viewBox="0 0 20 20"><circle cx="10" cy="10" r="9.3" fill="#52b064"/><text x="10" y="12.4" font-size="6.6" font-weight="bold" font-family="Liberation Sans,sans-serif" text-anchor="middle" fill="#dff3e2">XML</text></svg>
<span style="top:250.2px;line-height:16px;font-size:10.4px;color:#2a2af0;letter-spacing:-0.144px;left:336.2px;">000021501</span>
<span style="top:250.2px;line-height:16px;font-size:10.4px;color:#111;left:120.5px;width:600px;text-align:center;">1</span>
<span style="top:250.2px;line-height:16px;font-size:10.4px;color:#111;left:446px;">CTe</span>
<span style="top:250.2px;line-height:16px;font-size:10.4px;color:#111;letter-spacing:-0.039px;left:740.5px;">2023.02.08</span>
<span style="top:250.2px;line-height:16px;font-size:10.4px;color:#111;right:631px;">10,00</span>
<svg style="left:1017.8px;top:250.7px;" width="12.5" height="14.5" viewBox="0 0 20 20"><path d="M2 1v18" stroke="#222" stroke-width="1.6"/><rect x="3" y="2" width="14" height="11" fill="#fff" stroke="#222" stroke-width=".6"/><rect x="3.0" y="2.0" width="3.5" height="2.75" fill="#1a1a1a"/><rect x="3.0" y="7.5" width="3.5" height="2.75" fill="#1a1a1a"/><rect x="6.5" y="4.75" width="3.5" height="2.75" fill="#1a1a1a"/><rect x="6.5" y="10.25" width="3.5" height="2.75" fill="#1a1a1a"/><rect x="10.0" y="2.0" width="3.5" height="2.75" fill="#1a1a1a"/><rect x="10.0" y="7.5" width="3.5" height="2.75" fill="#1a1a1a"/><rect x="13.5" y="4.75" width="3.5" height="2.75" fill="#1a1a1a"/><rect x="13.5" y="10.25" width="3.5" height="2.75" fill="#1a1a1a"/></svg>
<svg style="left:1030.3px;top:251.2px;" width="12.5" height="14" viewBox="0 0 20 20"><rect x="6.4" y="1" width="7.4" height="6" fill="#f6a21e"/><rect x="3" y="6.4" width="9" height="5.4" fill="#f08a12"/><path d="M2.4 11.4h13.8l2.4 2.4v3.2H2.4z" fill="#1c4fb8"/><circle cx="6" cy="16.6" r="2.3" fill="#222"/><circle cx="15" cy="16.6" r="2.3" fill="#222"/><path d="M7.4 2h5.4v2.2H7.4z" fill="#d85a5a"/></svg>
<div style="left:272.5px;top:269px;width:12.5px;height:12.5px;background:#fff;border:1px solid #6e6e6e;border-radius:3px;"></div>
<svg style="left:307px;top:267.95px;" width="14" height="14" viewBox="0 0 20 20"><circle cx="10" cy="10" r="9.3" fill="#52b064"/><text x="10" y="12.4" font-size="6.6" font-weight="bold" font-family="Liberation Sans,sans-serif" text-anchor="middle" fill="#dff3e2">XML</text></svg>
<span style="top:267.15px;line-height:16px;font-size:10.4px;color:#2a2af0;letter-spacing:-0.144px;left:336.2px;">000564324</span>
<span style="top:267.15px;line-height:16px;font-size:10.4px;color:#111;left:120.5px;width:600px;text-align:center;">3</span>
<span style="top:267.15px;line-height:16px;font-size:10.4px;color:#111;left:446px;">NFe</span>
<svg style="left:505px;top:268.15px;" width="13.5" height="13.5" viewBox="0 0 20 20"><g transform="rotate(-24 10 10)"><rect x="3.2" y="3" width="13.6" height="14.4" fill="#f5c518" stroke="#9a7a10" stroke-width="1"/><path d="M5.6 7h8.8M5.6 10h8.8M5.6 13h5.6" stroke="#7a5c00" stroke-width="1.3"/></g></svg>
<span style="top:267.15px;line-height:16px;font-size:10.4px;color:#111;letter-spacing:-0.039px;left:740.5px;">2023.02.08</span>
<span style="top:267.15px;line-height:16px;font-size:10.4px;color:#111;right:631px;">42470,00</span>
<svg style="left:1017.8px;top:267.65px;" width="12.5" height="14.5" viewBox="0 0 20 20"><path d="M2 1v18" stroke="#222" stroke-width="1.6"/><rect x="3" y="2" width="14" height="11" fill="#fff" stroke="#222" stroke-width=".6"/><rect x="3.0" y="2.0" width="3.5" height="2.75" fill="#1a1a1a"/><rect x="3.0" y="7.5" width="3.5" height="2.75" fill="#1a1a1a"/><rect x="6.5" y="4.75" width="3.5" height="2.75" fill="#1a1a1a"/><rect x="6.5" y="10.25" width="3.5" height="2.75" fill="#1a1a1a"/><rect x="10.0" y="2.0" width="3.5" height="2.75" fill="#1a1a1a"/><rect x="10.0" y="7.5" width="3.5" height="2.75" fill="#1a1a1a"/><rect x="13.5" y="4.75" width="3.5" height="2.75" fill="#1a1a1a"/><rect x="13.5" y="10.25" width="3.5" height="2.75" fill="#1a1a1a"/></svg>
<div style="left:272.5px;top:286px;width:12.5px;height:12.5px;background:#fff;border:1px solid #6e6e6e;border-radius:3px;"></div>
<svg style="left:307px;top:284.9px;" width="14" height="14" viewBox="0 0 20 20"><circle cx="10" cy="10" r="9.3" fill="#52b064"/><text x="10" y="12.4" font-size="6.6" font-weight="bold" font-family="Liberation Sans,sans-serif" text-anchor="middle" fill="#dff3e2">XML</text></svg>
<span style="top:284.1px;line-height:16px;font-size:10.4px;color:#2a2af0;letter-spacing:-0.144px;left:336.2px;">000564323</span>
<span style="top:284.1px;line-height:16px;font-size:10.4px;color:#111;left:120.5px;width:600px;text-align:center;">3</span>
<span style="top:284.1px;line-height:16px;font-size:10.4px;color:#111;left:446px;">NFe</span>
<div style="left:504px;top:284px;width:194.5px;height:16px;background:#c81ad8;"></div>
<svg style="left:505.5px;top:285.6px;" width="13" height="13" viewBox="0 0 20 20"><g transform="rotate(-24 10 10)"><rect x="3.2" y="3" width="13.6" height="14.4" fill="#f5c518" stroke="#9a7a10" stroke-width="1"/><path d="M5.6 7h8.8M5.6 10h8.8M5.6 13h5.6" stroke="#7a5c00" stroke-width="1.3"/></g></svg>
<span style="top:284.1px;line-height:16px;font-size:10.4px;color:#111;letter-spacing:0.085px;left:520.5px;">Pendente de escrituração</span>
<span style="top:284.1px;line-height:16px;font-size:10.4px;color:#111;letter-spacing:-0.039px;left:740.5px;">2023.02.08</span>
<span style="top:284.1px;line-height:16px;font-size:10.4px;color:#111;right:631px;">42470,00</span>
<span style="top:284.1px;line-height:16px;font-size:10.4px;color:#111;letter-spacing:-0.005px;left:935px;">2023.03.17</span>
<svg style="left:1017.8px;top:284.6px;" width="12.5" height="14.5" viewBox="0 0 20 20"><path d="M2 1v18" stroke="#222" stroke-width="1.6"/><rect x="3" y="2" width="14" height="11" fill="#fff" stroke="#222" stroke-width=".6"/><rect x="3.0" y="2.0" width="3.5" height="2.75" fill="#1a1a1a"/><rect x="3.0" y="7.5" width="3.5" height="2.75" fill="#1a1a1a"/><rect x="6.5" y="4.75" width="3.5" height="2.75" fill="#1a1a1a"/><rect x="6.5" y="10.25" width="3.5" height="2.75" fill="#1a1a1a"/><rect x="10.0" y="2.0" width="3.5" height="2.75" fill="#1a1a1a"/><rect x="10.0" y="7.5" width="3.5" height="2.75" fill="#1a1a1a"/><rect x="13.5" y="4.75" width="3.5" height="2.75" fill="#1a1a1a"/><rect x="13.5" y="10.25" width="3.5" height="2.75" fill="#1a1a1a"/></svg>
<div style="left:272.5px;top:303px;width:12.5px;height:12.5px;background:#fff;border:1px solid #6e6e6e;border-radius:3px;"></div>
<div style="left:272.5px;top:320px;width:12.5px;height:12.5px;background:#fff;border:1px solid #6e6e6e;border-radius:3px;"></div>
<div style="left:272.5px;top:337px;width:12.5px;height:12.5px;background:#fff;border:1px solid #6e6e6e;border-radius:3px;"></div>
<div style="left:272.5px;top:354px;width:12.5px;height:12.5px;background:#fff;border:1px solid #6e6e6e;border-radius:3px;"></div>
<div style="left:272.5px;top:371px;width:12.5px;height:12.5px;background:#fff;border:1px solid #6e6e6e;border-radius:3px;"></div>
<div style="left:272.5px;top:387px;width:12.5px;height:12.5px;background:#fff;border:1px solid #6e6e6e;border-radius:3px;"></div>
<div style="left:272.5px;top:404px;width:12.5px;height:12.5px;background:#fff;border:1px solid #6e6e6e;border-radius:3px;"></div>
<div style="left:272.5px;top:421px;width:12.5px;height:12.5px;background:#fff;border:1px solid #6e6e6e;border-radius:3px;"></div>
<div style="left:272.5px;top:438px;width:12.5px;height:12.5px;background:#fff;border:1px solid #6e6e6e;border-radius:3px;"></div>
<div style="left:272.5px;top:455px;width:12.5px;height:12.5px;background:#fff;border:1px solid #6e6e6e;border-radius:3px;"></div>
<div style="left:272.5px;top:472px;width:12.5px;height:12.5px;background:#fff;border:1px solid #6e6e6e;border-radius:3px;"></div>
<div style="left:272.5px;top:489px;width:12.5px;height:12.5px;background:#fff;border:1px solid #6e6e6e;border-radius:3px;"></div>
<div style="left:272.5px;top:506px;width:12.5px;height:12.5px;background:#fff;border:1px solid #6e6e6e;border-radius:3px;"></div>
<div style="left:266.5px;top:668px;width:10px;height:15.5px;background:#f3e2c6;"></div>
<div style="left:266.5px;top:702.3px;width:10px;height:15.5px;background:#f3e2c6;"></div>
<div style="left:272.5px;top:551px;width:12.5px;height:12.5px;background:#fff;border:1px solid #6e6e6e;border-radius:3px;"></div>
<div style="left:272.5px;top:568px;width:12.5px;height:12.5px;background:#fff;border:1px solid #6e6e6e;border-radius:3px;"></div>
<div style="left:272.5px;top:585px;width:12.5px;height:12.5px;background:#fff;border:1px solid #6e6e6e;border-radius:3px;"></div>
<div style="left:272.5px;top:602px;width:12.5px;height:12.5px;background:#fff;border:1px solid #6e6e6e;border-radius:3px;"></div>
<div style="left:272.5px;top:619px;width:12.5px;height:12.5px;background:#fff;border:1px solid #6e6e6e;border-radius:3px;"></div>
<div style="left:272.5px;top:636px;width:12.5px;height:12.5px;background:#fff;border:1px solid #6e6e6e;border-radius:3px;"></div>
<div style="left:272.5px;top:653px;width:12.5px;height:12.5px;background:#fff;border:1px solid #6e6e6e;border-radius:3px;"></div>
<div style="left:272.5px;top:670px;width:12.5px;height:12.5px;background:#fff;border:1px solid #6e6e6e;border-radius:3px;background:transparent;"></div>
<div style="left:272.5px;top:687px;width:12.5px;height:12.5px;background:#fff;border:1px solid #6e6e6e;border-radius:3px;"></div>
<div style="left:272.5px;top:704px;width:12.5px;height:12.5px;background:#fff;border:1px solid #6e6e6e;border-radius:3px;background:transparent;"></div>
<div style="left:272.5px;top:721px;width:12.5px;height:12.5px;background:#fff;border:1px solid #6e6e6e;border-radius:3px;"></div>
<div style="left:272.5px;top:738px;width:12.5px;height:12.5px;background:#fff;border:1px solid #6e6e6e;border-radius:3px;"></div>
<div style="left:272.5px;top:755px;width:12.5px;height:12.5px;background:#fff;border:1px solid #6e6e6e;border-radius:3px;"></div>
<div style="left:266.5px;top:386px;width:10px;height:15.5px;background:#e4e4e4;"></div>
<div style="left:266.5px;top:760px;width:988px;height:16.5px;background:linear-gradient(#cccccc,#dddddd);"></div>
<div style="left:282.5px;top:767.8px;width:288px;height:2px;background:#7a7a7a;"></div>
<div style="left:275.5px;top:294px;width:980px;height:471px;background:#fbfbfb;border-radius:8px;box-shadow:0 0 0 1px rgba(120,120,120,.45),0 4px 14px rgba(0,0,0,.30);overflow:hidden;"><div style="left:0;top:0;width:980px;height:29px;background:#f3f3f3;"></div></div>
<svg style="left:283.5px;top:299.5px;" width="12.5" height="13.5" viewBox="0 0 12.5 13.5"><rect width="12.500" height="13.500" rx="1.500" fill="#fff"/><path d="M2.800 6.600h6.600v4.600H2.800zM6.100 9V4.400a1.900 1.900 0 0 1 1.900-1.900h1.800" stroke="#1b3fd0" stroke-width="1.700" fill="none"/></svg>
<span style="top:300px;line-height:16px;font-size:11.09px;color:#8c8c8c;font-family:'Liberation Sans',sans-serif;left:302px;">Fiscal.io - Visualizador de Documentos</span>
<div style="left:1140.5px;top:307.5px;width:10px;height:1px;background:#9a9a9a;"></div>
<div style="left:1184px;top:303.5px;width:9.5px;height:9.5px;border:1px solid #9a9a9a;border-radius:1.500px;"></div>
<svg style="left:1228.5px;top:303.5px;" width="10" height="10" viewBox="0 0 10 10"><path d="M.5.500l9 9M9.500.500l-9 9" stroke="#8a8a8a" stroke-width="1"/></svg>
<div style="left:276px;top:322.5px;width:979.5px;height:132.5px;background:#fff;border:1px solid #868c96;"></div>
<div style="left:305px;top:324px;width:1px;height:22.5px;background:#e3e3e3;"></div>
<div style="left:379.5px;top:324px;width:1px;height:22.5px;background:#e3e3e3;"></div>
<div style="left:421.5px;top:324px;width:1px;height:22.5px;background:#e3e3e3;"></div>
<div style="left:609.5px;top:324px;width:1px;height:22.5px;background:#e3e3e3;"></div>
<div style="left:680px;top:324px;width:1px;height:22.5px;background:#e3e3e3;"></div>
<div style="left:716px;top:324px;width:1px;height:22.5px;background:#e3e3e3;"></div>
<div style="left:792px;top:324px;width:1px;height:22.5px;background:#e3e3e3;"></div>
<div style="left:853px;top:324px;width:1px;height:22.5px;background:#e3e3e3;"></div>
<div style="left:927.5px;top:324px;width:1px;height:22.5px;background:#e3e3e3;"></div>
<div style="left:1116.5px;top:324px;width:1px;height:22.5px;background:#e3e3e3;"></div>
<div style="left:1144.5px;top:324px;width:1px;height:22.5px;background:#e3e3e3;"></div>
<div style="left:1172.5px;top:324px;width:1px;height:22.5px;background:#e3e3e3;"></div>
<div style="left:1199.5px;top:324px;width:1px;height:22.5px;background:#e3e3e3;"></div>
<div style="left:1204px;top:324px;width:1px;height:22.5px;background:#e3e3e3;"></div>
<div style="left:1209px;top:324px;width:1px;height:22.5px;background:#e3e3e3;"></div>
<div style="left:1213.5px;top:324px;width:1px;height:22.5px;background:#e3e3e3;"></div>
<div style="left:1218.5px;top:324px;width:1px;height:22.5px;background:#e3e3e3;"></div>
<div style="left:1222.5px;top:324px;width:1px;height:22.5px;background:#e3e3e3;"></div>
<span style="top:328.1px;line-height:16px;font-size:10.4px;color:#111;letter-spacing:0.095px;left:311px;">Documento</span>
<span style="top:328.1px;line-height:16px;font-size:10.4px;color:#111;left:100.5px;width:600px;text-align:center;">Serie</span>
<span style="top:328.1px;line-height:16px;font-size:10.4px;color:#111;letter-spacing:0.204px;left:428px;">Tipo</span>
<span style="top:328.1px;line-height:16px;font-size:10.4px;color:#111;left:345px;width:600px;text-align:center;">Evento</span>
<span style="top:328.1px;line-height:16px;font-size:10.4px;color:#111;left:398px;width:600px;text-align:center;">Seq.</span>
<span style="top:328.1px;line-height:16px;font-size:10.4px;color:#111;left:454px;width:600px;text-align:center;">Data</span>
<span style="top:328.1px;line-height:16px;font-size:10.4px;color:#111;left:522.5px;width:600px;text-align:center;">Hora</span>
<span style="top:328.1px;line-height:16px;font-size:10.4px;color:#111;left:590px;width:600px;text-align:center;">Protocolo</span>
<span style="top:328.1px;line-height:16px;font-size:10.4px;color:#111;letter-spacing:0.172px;left:934px;">Status</span>
<span style="top:328.1px;line-height:16px;font-size:10.4px;color:#111;letter-spacing:0.359px;left:1121.5px;width:19px;overflow:hidden;">D...</span>
<span style="top:328.1px;line-height:16px;font-size:10.4px;color:#111;letter-spacing:0.359px;left:1149.5px;width:19px;overflow:hidden;">D...</span>
<span style="top:328.1px;line-height:16px;font-size:10.4px;color:#111;letter-spacing:0.359px;left:1177.5px;width:19px;overflow:hidden;">D...</span>
<div style="left:297px;top:347.5px;width:928px;height:16px;background:#efefef;"></div>
<svg style="left:281.3px;top:347.3px;" width="15.8" height="15.8" viewBox="0 0 20 20"><circle cx="10" cy="10" r="9.3" fill="#3f9f7a"/><text x="10" y="12.4" font-size="6.6" font-weight="bold" font-family="Liberation Sans,sans-serif" text-anchor="middle" fill="#cfe9df">XML</text></svg>
<span style="top:348px;line-height:16px;font-size:10.4px;color:#111;letter-spacing:-0.069px;left:310.7px;">000000010</span>
<span style="top:348px;line-height:16px;font-size:10.4px;color:#111;left:101px;width:600px;text-align:center;">1</span>
<span style="top:348px;line-height:16px;font-size:10.4px;color:#111;letter-spacing:0.065px;left:428px;">Nota Fiscal Eletrônica</span>
<span style="top:348px;line-height:16px;font-size:10.4px;color:#111;letter-spacing:-0.005px;left:724.5px;">2023.02.04</span>
<span style="top:348px;line-height:16px;font-size:10.4px;color:#111;letter-spacing:0.256px;left:797.5px;">11:31:56</span>
<span style="top:348px;line-height:16px;font-size:10.4px;color:#111;letter-spacing:0.065px;left:858.5px;">34223002...</span>
<span style="top:348px;line-height:16px;font-size:10.4px;color:#111;letter-spacing:0.176px;left:934px;">Autorizado o uso da NF-e</span>
<span style="top:348px;line-height:16px;font-size:10.4px;color:#111;letter-spacing:0.494px;left:1121.5px;">S...</span>
<span style="top:348px;line-height:16px;font-size:10.4px;color:#111;letter-spacing:0.489px;left:1149.5px;">2...</span>
<span style="top:348px;line-height:16px;font-size:10.4px;color:#111;letter-spacing:0.489px;left:1177.5px;">0...</span>
<svg style="left:281.3px;top:363.4px;" width="15.8" height="15.8" viewBox="0 0 20 20"><circle cx="10" cy="10" r="9.3" fill="#52b064"/><text x="10" y="12.4" font-size="6.6" font-weight="bold" font-family="Liberation Sans,sans-serif" text-anchor="middle" fill="#dff3e2">XML</text></svg>
<span style="top:364.1px;line-height:16px;font-size:10.4px;color:#111;letter-spacing:-0.069px;left:310.7px;">000000010</span>
<span style="top:364.1px;line-height:16px;font-size:10.4px;color:#111;left:101px;width:600px;text-align:center;">1</span>
<span style="top:364.1px;line-height:16px;font-size:10.4px;color:#111;letter-spacing:0.22px;left:428px;">Registro de Autorização de CT...</span>
<span style="top:364.1px;line-height:16px;font-size:10.4px;color:#111;letter-spacing:-0.14px;left:345px;width:600px;text-align:center;">610600</span>
<span style="top:364.1px;line-height:16px;font-size:10.4px;color:#111;left:398px;width:600px;text-align:center;">1</span>
<span style="top:364.1px;line-height:16px;font-size:10.4px;color:#111;letter-spacing:-0.005px;left:724.5px;">2023.02.04</span>
<span style="top:364.1px;line-height:16px;font-size:10.4px;color:#111;letter-spacing:0.256px;left:797.5px;">15:58:59</span>
<span style="top:364.1px;line-height:16px;font-size:10.4px;color:#111;letter-spacing:0.065px;left:858.5px;">89123075...</span>
<span style="top:364.1px;line-height:16px;font-size:10.4px;color:#111;letter-spacing:0.494px;left:1121.5px;">S...</span>
<span style="top:364.1px;line-height:16px;font-size:10.4px;color:#111;letter-spacing:0.489px;left:1149.5px;">2...</span>
<span style="top:364.1px;line-height:16px;font-size:10.4px;color:#111;letter-spacing:0.489px;left:1177.5px;">0...</span>
<div style="left:276px;top:455px;width:979.5px;height:27px;background:linear-gradient(#fdfdfd,#f4f4f4 60%,#ececec);"></div>
<div style="left:279px;top:461px;width:1px;height:18px;background:repeating-linear-gradient(#9a9a9a 0 1px,transparent 1px 3px);"></div>
<svg style="left:285.5px;top:462.5px;" width="15.5" height="15.5" viewBox="0 0 20 20"><rect x=".8" y="3" width="18.400" height="14.200" rx="1.500" fill="#f6a21e" stroke="#2b2b5e" stroke-width="1.500"/><path d="M1.600 3.800L10 11.200l8.400-7.400z" fill="#fde3d6" stroke="#2b2b5e" stroke-width="1.100"/><path d="M1.800 16.400l6-5.400M18.200 16.400l-6-5.400" stroke="#2b2b5e" stroke-width="1.100"/></svg>
<span style="top:461.7px;line-height:16px;font-size:11.35px;color:#111;letter-spacing:0.101px;left:304px;">Enviar por email</span>
<div style="left:407.5px;top:463.5px;width:1px;height:13.5px;background:#c2c2c2;"></div>
<svg style="left:413px;top:463px;" width="14.5" height="14.5" viewBox="0 0 20 20"><circle cx="10" cy="10" r="9.3" fill="#19a9c9"/><rect x="4.6" y="8.6" width="10.8" height="6.6" rx="1" fill="#1d2a44"/><rect x="6.4" y="4.4" width="7.2" height="4.6" fill="#fff"/><rect x="6" y="11" width="8" height="2" fill="#fff"/></svg>
<span style="top:461.7px;line-height:16px;font-size:11.35px;color:#111;letter-spacing:0.111px;left:429.9px;">Exportar XML + PDF</span>
<div style="left:555px;top:463.5px;width:1px;height:13.5px;background:#c2c2c2;"></div>
<svg style="left:559.5px;top:462.5px;" width="15" height="15" viewBox="0 0 20 20"><path d="M3.4 9V2.4h9.6l3.6 3.4V9" fill="#fff" stroke="#55606c" stroke-width="1.1"/><rect x=".6" y="7.6" width="18.8" height="9.4" rx="1.6" fill="#3a4a66"/><text x="10" y="15" font-size="7.2" font-weight="bold" font-family="Liberation Sans,sans-serif" text-anchor="middle" fill="#fff">PDF</text><rect x="3.4" y="16.2" width="13.2" height="2.2" fill="#cfd6de"/></svg>
<span style="top:461.7px;line-height:16px;font-size:11.35px;color:#111;letter-spacing:0.155px;left:578px;">Exportar PDF</span>
<div style="left:663px;top:463.5px;width:1px;height:13.5px;background:#c2c2c2;"></div>
<svg style="left:668.3px;top:463.2px;" width="13.8" height="13.8" viewBox="0 0 20 20"><circle cx="10" cy="10" r="9.3" fill="#3db5f2"/><text x="10" y="12.4" font-size="6.6" font-weight="bold" font-family="Liberation Sans,sans-serif" text-anchor="middle" fill="#fff">XML</text></svg>
<span style="top:461.7px;line-height:16px;font-size:11.35px;color:#111;letter-spacing:0.066px;left:686px;">Exportar XML</span>
<div style="left:772.5px;top:463.5px;width:1px;height:13.5px;background:#c2c2c2;"></div>
<svg style="left:776.8px;top:462.5px;" width="15" height="15" viewBox="0 0 20 20"><rect x="0.8" y="3.2" width="11.5" height="10.6" rx="1.4" fill="#f07a12"/><path d="M12.6 6.2h3.6l3 3.6v4h-6.6z" fill="#f39a3e"/><path d="M13.8 7.4h2l1.7 2.2h-3.7z" fill="#7a4a20"/><rect x="0.8" y="13" width="18.4" height="1.8" fill="#5a4a3a"/><circle cx="5" cy="15.4" r="2.2" fill="#333"/><circle cx="15" cy="15.4" r="2.2" fill="#333"/><circle cx="5" cy="15.4" r=".9" fill="#bbb"/><circle cx="15" cy="15.4" r=".9" fill="#bbb"/></svg>
<span style="top:461.7px;line-height:16px;font-size:11.35px;color:#111;letter-spacing:0.47px;left:794.8px;">EDI</span>
<svg style="left:820.3px;top:469.6px;" width="5.4" height="3.4" viewBox="0 0 5.4 3.4"><path d="M0 0h5.400L2.700 3.200z" fill="#111"/></svg>
<div style="left:832.5px;top:463.5px;width:1px;height:13.5px;background:#c2c2c2;"></div>
<svg style="left:837.5px;top:463px;" width="14" height="14" viewBox="0 0 20 20"><rect x="8" y="3" width="11.4" height="14" fill="#fff" stroke="#9fd0ae" stroke-width=".8"/><path d="M12 5.5h3M16 5.5h2.6M12 8.5h3M16 8.5h2.6M12 11.5h3M16 11.5h2.6M12 14.5h3M16 14.5h2.6" stroke="#8cc79e" stroke-width="1.4"/><path d="M.6 2.8L11.6.6v18.8L.6 17.2z" fill="#1f7a43"/><path d="M3.6 6.6l4.6 6.8M8.2 6.6L3.6 13.4" stroke="#fff" stroke-width="1.7"/></svg>
<div style="left:276px;top:482px;width:979.5px;height:21px;background:#f0f0f0;"></div>
<div style="left:276px;top:483.5px;width:55.5px;height:23px;background:#fff;border:1px solid #dcdcdc;border-bottom:none;"></div>
<svg style="left:283px;top:485px;" width="15" height="15" viewBox="0 0 20 20"><path d="M3.4 9V2.4h9.6l3.6 3.4V9" fill="#fff" stroke="#55606c" stroke-width="1.1"/><rect x=".6" y="7.6" width="18.8" height="9.4" rx="1.6" fill="#3a4a66"/><text x="10" y="15" font-size="7.2" font-weight="bold" font-family="Liberation Sans,sans-serif" text-anchor="middle" fill="#fff">PDF</text><rect x="3.4" y="16.2" width="13.2" height="2.2" fill="#cfd6de"/></svg>
<span style="top:485.5px;line-height:16px;font-size:10.4px;color:#111;letter-spacing:-0.5px;left:304.9px;">PDF</span>
<div style="left:331.5px;top:485.5px;width:51.5px;height:19.5px;background:#f5f5f5;border:1px solid #e2e2e2;border-bottom:none;"></div>
<svg style="left:336.6px;top:486.5px;" width="14" height="14" viewBox="0 0 20 20"><circle cx="10" cy="10" r="9.3" fill="#3db5f2"/><text x="10" y="12.4" font-size="6.6" font-weight="bold" font-family="Liberation Sans,sans-serif" text-anchor="middle" fill="#fff">XML</text></svg>
<span style="top:485.5px;line-height:16px;font-size:10.4px;color:#111;letter-spacing:-0.396px;left:356.9px;">XML</span>
<div style="left:383px;top:485.5px;width:55px;height:19.5px;background:#f5f5f5;border:1px solid #e2e2e2;border-bottom:none;"></div>
<svg style="left:389px;top:486.5px;" width="14" height="14" viewBox="0 0 20 20"><rect x="0.8" y="3.2" width="11.5" height="10.6" rx="1.4" fill="#f07a12"/><path d="M12.6 6.2h3.6l3 3.6v4h-6.6z" fill="#f39a3e"/><path d="M13.8 7.4h2l1.7 2.2h-3.7z" fill="#7a4a20"/><rect x="0.8" y="13" width="18.4" height="1.8" fill="#5a4a3a"/><circle cx="5" cy="15.4" r="2.2" fill="#333"/><circle cx="15" cy="15.4" r="2.2" fill="#333"/><circle cx="5" cy="15.4" r=".9" fill="#bbb"/><circle cx="15" cy="15.4" r=".9" fill="#bbb"/></svg>
<span style="top:485.5px;line-height:16px;font-size:10.4px;color:#111;letter-spacing:0.5px;left:410px;">EDI</span>
<div style="left:438px;top:485.5px;width:99.5px;height:19.5px;background:#f5f5f5;border:1px solid #e2e2e2;border-bottom:none;"></div>
<svg style="left:445.5px;top:486.5px;" width="14" height="14" viewBox="0 0 20 20"><g stroke="#2a8ad8" stroke-width="1.6"><path d="M10 10L10 1.4M10 10L10 18.6M10 10L2.4 5M10 10L17.6 5M10 10L2.4 15M10 10L17.6 15"/></g><circle cx="10" cy="10" r="2.8" fill="#1c2a3a"/><circle cx="10" cy="1.8" r="1.5" fill="#f2a33a"/><circle cx="10" cy="18.2" r="1.5" fill="#f2a33a"/><circle cx="2.6" cy="5.2" r="1.5" fill="#35b558"/><circle cx="17.4" cy="5.2" r="1.5" fill="#e03a3a"/><circle cx="2.6" cy="14.8" r="1.5" fill="#2a8ad8"/><circle cx="17.4" cy="14.8" r="1.5" fill="#2a8ad8"/></svg>
<span style="top:485.5px;line-height:16px;font-size:10.4px;color:#111;letter-spacing:0.093px;left:465.9px;">Documentos</span>
<div style="left:537.5px;top:485.5px;width:99px;height:19.5px;background:#f5f5f5;border:1px solid #e2e2e2;border-bottom:none;"></div>
<svg style="left:544.5px;top:486.5px;" width="14" height="14" viewBox="0 0 20 20"><g transform="rotate(-24 10 10)"><rect x="3.2" y="3" width="13.6" height="14.4" fill="#f5c518" stroke="#9a7a10" stroke-width="1"/><path d="M5.6 7h8.8M5.6 10h8.8M5.6 13h5.6" stroke="#7a5c00" stroke-width="1.3"/></g></svg>
<span style="top:485.5px;line-height:16px;font-size:10.4px;color:#111;letter-spacing:0.206px;left:564.8px;">Comentários</span>
<div style="left:282.5px;top:503px;width:966.5px;height:27.5px;background:linear-gradient(#ffffff,#f4f7fd 45%,#cfdbf3);"></div>
<svg style="left:287px;top:510px;" width="15.5" height="15.5" viewBox="0 0 20 20"><rect x="5" y="1.4" width="10" height="7" fill="#fff" stroke="#7a8496" stroke-width="1"/><rect x="1" y="7" width="18" height="8.4" rx="1.8" fill="#dfe3ea" stroke="#6a7486" stroke-width="1"/><rect x="4.6" y="12" width="10.8" height="6.4" fill="#fff" stroke="#7a8496" stroke-width="1"/><path d="M6.4 14.4h7.2M6.4 16.2h7.2" stroke="#9aa4b4" stroke-width=".9"/></svg>
<span style="top:510px;line-height:16px;font-size:10.7px;color:#111;font-family:'Liberation Sans',sans-serif;left:305.6px;">Print</span>
<svg style="left:337.6px;top:510.5px;" width="15.2" height="15.2" viewBox="0 0 20 20"><rect x="1" y="1" width="18" height="18" rx="1.6" fill="#3f8fe0" stroke="#2a5fa8" stroke-width="1"/><rect x="4" y="1.6" width="12" height="7.4" fill="#fff"/><rect x="4.6" y="11.8" width="10.8" height="7" fill="#e6e9ee"/><rect x="6.4" y="13" width="2.6" height="4.4" fill="#8ac06a"/><path d="M5.4 4h9.2M5.4 6.2h9.2" stroke="#b9c6d8" stroke-width=".9"/></svg>
<span style="top:510px;line-height:16px;font-size:10.09px;color:#111;font-family:'Liberation Sans',sans-serif;left:356.9px;">Save</span>
<svg style="left:389.9px;top:517.6px;" width="5.4" height="3.4" viewBox="0 0 5.4 3.4"><path d="M0 0h5.400L2.700 3.200z" fill="#111"/></svg>
<svg style="left:403.4px;top:511px;" width="14.2" height="14.2" viewBox="0 0 20 20"><rect x="2.4" y="2" width="5.2" height="7" rx="1.6" fill="#4a7ab8"/><rect x="12.4" y="2" width="5.2" height="7" rx="1.6" fill="#4a7ab8"/><rect x="1" y="8" width="7.6" height="10" rx="2" fill="#3a66a0"/><rect x="11.4" y="8" width="7.6" height="10" rx="2" fill="#3a66a0"/><rect x="8" y="6" width="4" height="6" fill="#27466f"/></svg>
<div style="left:422.5px;top:510px;width:1px;height:17px;background:#b4bccb;"></div>
<svg style="left:430px;top:511.5px;" width="11" height="13" viewBox="0 0 11 13"><rect x=".5" y=".8" width="2.200" height="11.400" fill="#2f6fd0"/><path d="M10.500.8v11.400L3.200 6.500z" fill="#2f6fd0"/><path d="M9.500 3v7L5 6.500z" fill="#9cc0f0"/></svg>
<svg style="left:454.5px;top:511.5px;" width="8" height="13" viewBox="0 0 8 13"><path d="M7.800.8v11.400L.5 6.500z" fill="#2f6fd0"/></svg>
<div style="left:471px;top:509.5px;width:37px;height:17px;background:#fff;border:1px solid #a9b4c6;border-radius:2px;"></div>
<span style="top:510px;line-height:16px;font-size:11px;color:#111;font-family:'Liberation Sans',sans-serif;right:1035.5px;">1</span>
<span style="top:510px;line-height:16px;font-size:11.15px;color:#111;font-family:'Liberation Sans',sans-serif;left:512.4px;">of 1</span>
<svg style="left:544.5px;top:511.5px;" width="8" height="13" viewBox="0 0 8 13"><path d="M.2.800v11.400L7.500 6.500z" fill="#2f6fd0"/></svg>
<svg style="left:565.5px;top:511.5px;" width="11" height="13" viewBox="0 0 11 13"><rect x="8.300" y=".8" width="2.200" height="11.400" fill="#2f6fd0"/><path d="M.5.800v11.400L7.800 6.500z" fill="#2f6fd0"/><path d="M1.500 3v7L6 6.500z" fill="#9cc0f0"/></svg>
<div style="left:282.5px;top:530px;width:966.5px;height:206px;background:linear-gradient(#4d4d4d 0,#4d4d4d 72%,#0c0c0c 100%);"></div>
<div style="left:282.500px;top:530px;width:950.500px;height:206px;overflow:hidden;"><div style="left:-282.500px;top:-530px;width:1541px;height:867px;"><div style="left:384px;top:540px;width:746.5px;height:230px;background:#fff;border:2px solid #f5b62a;"></div>
<div style="left:405px;top:564px;width:701.6px;height:1px;background:#111;"></div>
<div style="left:405px;top:628.5px;width:701.6px;height:1px;background:#111;"></div>
<div style="left:405px;top:564px;width:1px;height:65px;background:#111;"></div>
<div style="left:1105.7px;top:564px;width:1px;height:65px;background:#111;"></div>
<div style="left:1010.5px;top:564px;width:1px;height:65px;background:#111;"></div>
<div style="left:405px;top:600.5px;width:605.5px;height:1px;background:#111;"></div>
<div style="left:541px;top:600.5px;width:1px;height:28.5px;background:#111;"></div>
<span style="top:566.2px;line-height:10px;font-size:8.95px;color:#111;font-family:'Liberation Serif',serif;left:408.8px;">Recebemos de FRUTAS LTDA os produtos e/ou serviços constantes da Nota Fiscal Eletrônica indicada ao lado.</span>
<span style="top:576.4px;line-height:10px;font-size:8.98px;color:#111;font-family:'Liberation Serif',serif;left:408.8px;">Emissão:  04/02/2023 Dest/Reme: FRUTAS LTDA Valor Total: R$ 77.000,00</span>
<span style="top:602.1px;line-height:9px;font-size:7.78px;color:#111;font-family:'Liberation Serif',serif;left:408.3px;">DATA DO RECEBIMENTO</span>
<span style="top:602.1px;line-height:9px;font-size:7.66px;color:#111;font-family:'Liberation Serif',serif;left:544px;">IDENTIFICAÇÃO E ASSINATURA DO RECEBEDOR</span>
<span style="top:574.1px;line-height:13px;font-size:12.3px;color:#111;font-family:'Liberation Serif',serif;font-weight:bold;left:757px;width:600px;text-align:center;">NF-e</span>
<span style="top:588.4px;line-height:13px;font-size:12.7px;color:#111;font-family:'Liberation Serif',serif;font-weight:bold;left:757.5px;width:600px;text-align:center;">Nº 000.000.010</span>
<span style="top:603.5px;line-height:13px;font-size:12.7px;color:#111;font-family:'Liberation Serif',serif;font-weight:bold;left:757px;width:600px;text-align:center;">Série 001</span>
<div style="left:405px;top:634px;width:702px;height:1px;background:repeating-linear-gradient(90deg,#444 0 1px,transparent 1px 2px);"></div>
<div style="left:405px;top:639px;width:701.6px;height:1px;background:#111;"></div>
<div style="left:405px;top:639px;width:1px;height:101px;background:#111;"></div>
<div style="left:1105.7px;top:639px;width:1px;height:101px;background:#111;"></div>
<div style="left:697.5px;top:639px;width:1px;height:101px;background:#111;"></div>
<div style="left:803.5px;top:639px;width:1px;height:101px;background:#111;"></div>
<div style="left:803.5px;top:685.3px;width:303px;height:1px;background:#111;"></div>
<div style="left:803.5px;top:713.8px;width:303px;height:1px;background:#111;"></div>
<span style="top:659.7px;line-height:12px;font-size:10.6px;color:#111;font-family:'Liberation Serif',serif;font-weight:bold;left:269.7px;width:600px;text-align:center;">FRUTAS LTDA</span>
<span style="top:692.2px;line-height:10px;font-size:8.7px;color:#111;font-family:'Liberation Serif',serif;left:266px;width:600px;text-align:center;">ESTRDA , SN,  BARRO PRETO,</span>
<span style="top:703px;line-height:10px;font-size:8.6px;color:#111;font-family:'Liberation Serif',serif;left:270px;width:600px;text-align:center;">SANTA SUL - SC</span>
<span style="top:641.6px;line-height:16px;font-size:15px;color:#111;font-family:'Liberation Serif',serif;font-weight:bold;left:449.6px;width:600px;text-align:center;">DANFE</span>
<span style="top:655.5px;line-height:11px;font-size:9.91px;color:#111;font-family:'Liberation Serif',serif;left:703.5px;">Documento Auxiliar da</span>
<span style="top:666.5px;line-height:11px;font-size:10.12px;color:#111;font-family:'Liberation Serif',serif;left:706px;">Nota Fiscal Eletrônica</span>
<span style="top:681.5px;line-height:11px;font-size:10.56px;color:#111;font-family:'Liberation Serif',serif;left:703.5px;">0 - ENTRADA</span>
<span style="top:693px;line-height:11px;font-size:10.82px;color:#111;font-family:'Liberation Serif',serif;left:703.5px;">1 - SAÍDA</span>
<div style="left:772.5px;top:683.5px;width:21.5px;height:21px;border:1px solid #111;"></div>
<span style="top:688px;line-height:12px;font-size:12.5px;color:#111;font-family:'Liberation Serif',serif;font-weight:bold;left:483px;width:600px;text-align:center;">1</span>
<span style="top:707.3px;line-height:13px;font-size:13.17px;color:#111;font-family:'Liberation Serif',serif;font-weight:bold;left:703px;">Nº 000.000.010</span>
<span style="top:721.5px;line-height:13px;font-size:12.21px;color:#111;font-family:'Liberation Serif',serif;font-weight:bold;left:712px;">SÉRIE 001</span>
<svg style="left:825px;top:644px;" width="262" height="37" viewBox="0 0 262 37"><g fill="#0a0a0a" shape-rendering="crispEdges"><rect x="0" y="0" width="2" height="37"/><rect x="4" y="0" width="2" height="37"/><rect x="7" y="0" width="1" height="37"/><rect x="10" y="0" width="3" height="37"/><rect x="14" y="0" width="1" height="37"/><rect x="17" y="0" width="2" height="37"/><rect x="20" y="0" width="1" height="37"/><rect x="22" y="0" width="3" height="37"/><rect x="27" y="0" width="2" height="37"/><rect x="30" y="0" width="3" height="37"/><rect x="34" y="0" width="3" height="37"/><rect x="38" y="0" width="1" height="37"/><rect x="40" y="0" width="1" height="37"/><rect x="42" y="0" width="3" height="37"/><rect x="46" y="0" width="2" height="37"/><rect x="49" y="0" width="2" height="37"/><rect x="52" y="0" width="3" height="37"/><rect x="56" y="0" width="2" height="37"/><rect x="60" y="0" width="1" height="37"/><rect x="62" y="0" width="2" height="37"/><rect x="65" y="0" width="2" height="37"/><rect x="68" y="0" width="2" height="37"/><rect x="71" y="0" width="1" height="37"/><rect x="73" y="0" width="1" height="37"/><rect x="75" y="0" width="3" height="37"/><rect x="79" y="0" width="2" height="37"/><rect x="82" y="0" width="2" height="37"/><rect x="86" y="0" width="1" height="37"/><rect x="88" y="0" width="1" height="37"/><rect x="90" y="0" width="1" height="37"/><rect x="92" y="0" width="2" height="37"/><rect x="96" y="0" width="2" height="37"/><rect x="100" y="0" width="1" height="37"/><rect x="102" y="0" width="2" height="37"/><rect x="105" y="0" width="1" height="37"/><rect x="107" y="0" width="2" height="37"/><rect x="110" y="0" width="2" height="37"/><rect x="113" y="0" width="1" height="37"/><rect x="115" y="0" width="1" height="37"/><rect x="117" y="0" width="1" height="37"/><rect x="120" y="0" width="2" height="37"/><rect x="123" y="0" width="3" height="37"/><rect x="127" y="0" width="2" height="37"/><rect x="130" y="0" width="1" height="37"/><rect x="133" y="0" width="2" height="37"/><rect x="136" y="0" width="2" height="37"/><rect x="140" y="0" width="1" height="37"/><rect x="142" y="0" width="2" height="37"/><rect x="145" y="0" width="1" height="37"/><rect x="147" y="0" width="1" height="37"/><rect x="150" y="0" width="3" height="37"/><rect x="154" y="0" width="1" height="37"/><rect x="156" y="0" width="1" height="37"/><rect x="159" y="0" width="2" height="37"/><rect x="162" y="0" width="3" height="37"/><rect x="166" y="0" width="2" height="37"/><rect x="170" y="0" width="1" height="37"/><rect x="172" y="0" width="1" height="37"/><rect x="174" y="0" width="3" height="37"/><rect x="178" y="0" width="1" height="37"/><rect x="180" y="0" width="2" height="37"/><rect x="184" y="0" width="1" height="37"/><rect x="187" y="0" width="3" height="37"/><rect x="191" y="0" width="2" height="37"/><rect x="194" y="0" width="1" height="37"/><rect x="196" y="0" width="1" height="37"/><rect x="198" y="0" width="1" height="37"/><rect x="200" y="0" width="3" height="37"/><rect x="204" y="0" width="2" height="37"/><rect x="208" y="0" width="3" height="37"/><rect x="212" y="0" width="2" height="37"/><rect x="215" y="0" width="1" height="37"/><rect x="217" y="0" width="1" height="37"/><rect x="219" y="0" width="1" height="37"/><rect x="222" y="0" width="2" height="37"/><rect x="226" y="0" width="3" height="37"/><rect x="231" y="0" width="2" height="37"/><rect x="234" y="0" width="1" height="37"/><rect x="236" y="0" width="1" height="37"/><rect x="239" y="0" width="3" height="37"/><rect x="243" y="0" width="2" height="37"/><rect x="246" y="0" width="1" height="37"/><rect x="248" y="0" width="1" height="37"/><rect x="250" y="0" width="2" height="37"/><rect x="254" y="0" width="1" height="37"/><rect x="256" y="0" width="1" height="37"/><rect x="258" y="0" width="2" height="37"/></g></svg>
<span style="top:687px;line-height:8px;font-size:6.61px;color:#111;font-family:'Liberation Serif',serif;left:806px;">CHAVE DE ACESSO</span>
<span style="top:696.4px;line-height:12px;font-size:11.27px;color:#111;font-family:'Liberation Serif',serif;font-weight:bold;left:816px;">1010 1010 1010 1010 1010 1010 1000 0000 1010 0000 1010</span>
<span style="top:721px;line-height:12px;font-size:10.22px;color:#111;font-family:'Liberation Serif',serif;left:845.8px;">Consulta de autenticidade no portal nacional da NF-e</span>
<span style="top:732.5px;line-height:12px;font-size:7.67px;color:#111;font-family:'Liberation Serif',serif;left:860px;">www.nfe.fazenda.gov.br/portal ou no site da Sefaz autorizadora</span></div></div>
<div style="left:1233px;top:530px;width:16px;height:206px;background:#3e3e3e;"></div>
<svg style="left:1236px;top:534px;" width="10" height="7" viewBox="0 0 10 7"><path d="M0 6.500L5 .5l5 6z" fill="#bdbdbd"/></svg>
<svg style="left:1236px;top:724px;" width="10" height="7" viewBox="0 0 10 7"><path d="M0 .5L5 6.500l5-6z" fill="#bdbdbd"/></svg>
<div style="left:1235.5px;top:547.5px;width:11.5px;height:30.5px;background:linear-gradient(90deg,#fdfdfd,#d9d9d9);border:1px solid #9a9a9a;border-radius:2px;"></div>
<div style="left:1238px;top:559px;width:6.5px;height:1px;background:#8d8d8d;"></div>
<div style="left:1238px;top:561px;width:6.5px;height:1px;background:#8d8d8d;"></div>
<div style="left:1238px;top:563px;width:6.5px;height:1px;background:#8d8d8d;"></div>
<div style="left:1238px;top:565px;width:6.5px;height:1px;background:#8d8d8d;"></div>
<div style="left:282.5px;top:736px;width:966.5px;height:21.5px;background:linear-gradient(#5a6582 0,#454d64 37%,#10131f 39%,#3b4b74 100%);"></div>
<span style="top:739.8px;line-height:16px;font-size:10.26px;color:#fff;font-family:'Liberation Sans',sans-serif;left:285.5px;">Page 1 of 1</span>
<div style="left:1016.5px;top:736px;width:232.5px;height:21.5px;background:linear-gradient(#6b8199 0,#2f567a 12%,#1f4468 50%,#173a5e 100%);border-left:1px solid #7f93ab;"></div>
<div style="left:1021.5px;top:739px;width:62px;height:17.5px;background:#eef1f6;border:1px solid #f7f9fc;border-radius:2px;"></div>
<svg style="left:1023px;top:740px;" width="19" height="15.5" viewBox="0 0 19 15.500"><rect x=".4" y=".4" width="18.200" height="14.700" rx="1.500" fill="#dfe5ef" stroke="#b4bfd2" stroke-width=".8"/><rect x="4" y="3" width="10" height="9" fill="#fff" stroke="#5b78b0" stroke-width=".8"/><path d="M1.500 7.500h5M11.500 7.500h5" stroke="#2f6fd0" stroke-width="1.400"/><path d="M1 7.500l2.500-2v4zM17 7.500l-2.500-2v4z" fill="#2f6fd0"/></svg>
<svg style="left:1043px;top:740px;" width="19" height="15.5" viewBox="0 0 19 15.500"><rect x=".4" y=".4" width="18.200" height="14.700" rx="1.500" fill="#dfe5ef" stroke="#b4bfd2" stroke-width=".8"/><rect x="5" y="2.500" width="8" height="10" rx="1" fill="#fff" stroke="#6d7fa3" stroke-width=".9"/><rect x="7" y="4.500" width="4.500" height="6.500" fill="#c9d3e6"/></svg>
<svg style="left:1063px;top:740px;" width="19" height="15.5" viewBox="0 0 19 15.500"><rect x=".4" y=".4" width="18.200" height="14.700" rx="1.500" fill="#dfe5ef" stroke="#b4bfd2" stroke-width=".8"/><rect x="4" y="2.500" width="10.500" height="10.500" fill="#fff" stroke="#6d7fa3" stroke-width=".9"/><path d="M5 5h8.500M5 7h8.500M5 9h8.500M5 11h8.500" stroke="#8a96ad" stroke-width=".8"/></svg>
<span style="top:739.8px;line-height:16px;font-size:10.17px;color:#fff;font-family:'Liberation Sans',sans-serif;left:1089.5px;">100%</span>
<div style="left:1132px;top:746.5px;width:104px;height:1.5px;background:#cfd8e6;"></div>
<svg style="left:1122px;top:740.5px;" width="13" height="13" viewBox="0 0 13 13"><circle cx="6.500" cy="6.500" r="6" fill="#e1e6ee" stroke="#7b889e"/><path d="M3 6.500h7" stroke="#3a465c" stroke-width="1.600"/></svg>
<svg style="left:1232.5px;top:740.5px;" width="13" height="13" viewBox="0 0 13 13"><circle cx="6.500" cy="6.500" r="6" fill="#e1e6ee" stroke="#7b889e"/><path d="M3 6.500h7M6.500 3v7" stroke="#3a465c" stroke-width="1.600"/></svg>
<svg style="left:1179.5px;top:741px;" width="7" height="12" viewBox="0 0 7 12"><path d="M.5.500h6v7.500l-3 3.500-3-3.500z" fill="#e4e8ef" stroke="#6c7890" stroke-width=".8"/></svg>
<svg style="left:212px;top:468px;" width="72" height="46" viewBox="0 0 72 46"><path d="M2.400 23.500L51.100 13.700V4.400L70.200 23.500 51.100 42.600V33.100z" fill="#ff0000"/></svg>
<div style="left:1263px;top:87px;width:212.6px;height:30px;background:linear-gradient(#ffffff,#f6f6f6 55%,#ebebeb);border-radius:5px 0 0 0;"></div>
<svg style="left:1270.5px;top:91.5px;" width="17" height="19" viewBox="0 0 20 20"><path d="M4.400 13.600C2.600 5.600 5.600.800 10 .800s7.400 4.800 5.600 12.800z" fill="#a0673a"/><path d="M1 20c0-4.600 2.600-6.200 9-6.200s9 1.600 9 6.200z" fill="#2f8fe0"/><path d="M7.200 13.600L10 17.400l2.800-3.800z" fill="#fff"/><ellipse cx="10" cy="8" rx="3.900" ry="4.700" fill="#f6d2b2"/><path d="M5.800 7.600C6.200 4.400 8 3 10 3s3.800 1.400 4.200 4.600C12.800 6 11.600 5.200 10 5.200S7.200 6 5.800 7.600z" fill="#a0673a"/><path d="M5 5.600C5.800 2.400 8 1.200 10 1.200s4.200 1.200 5 4.400" stroke="#2a2a2a" stroke-width="1.100" fill="none"/><rect x="4" y="5.600" width="2" height="4" rx=".9" fill="#2a2a2a"/><path d="M5 9.600c.4 2.200 1.800 3 3.600 3" stroke="#2a2a2a" stroke-width=".9" fill="none"/><circle cx="9" cy="12.600" r="1" fill="#2a2a2a"/></svg>
<span style="top:92.7px;line-height:16px;font-size:10.4px;color:#111;letter-spacing:0.181px;left:1291px;">Suporte</span>
<div style="left:1342px;top:93.5px;width:1px;height:12px;background:#c6c6c6;"></div>
<svg style="left:1346.5px;top:92px;" width="19" height="18" viewBox="0 0 20 20"><path d="M1 1.800h16.400l-6.200 7v7.200l-3.600 2.200V8.800z" fill="#fff" stroke="#707070" stroke-width="1.500" stroke-linejoin="round"/><circle cx="14.600" cy="14.400" r="4.300" fill="#fff" stroke="#707070" stroke-width="1.300"/><path d="M13 12.800l3.200 3.200M16.200 12.800L13 16" stroke="#707070" stroke-width="1.300"/></svg>
<div style="left:1370.5px;top:93.5px;width:1px;height:12px;background:#c6c6c6;"></div>
<svg style="left:1375.5px;top:92px;" width="17.5" height="17.5" viewBox="0 0 20 20"><g transform="translate(10 10)"><g fill="#f9c21c"><rect x="-7.200" y="-7.200" width="14.400" height="14.400" rx="2.200"/><rect x="-7.200" y="-7.200" width="14.400" height="14.400" rx="2.200" transform="rotate(45)"/></g><path d="M-3.800-.8a3.900 3.900 0 0 1 6.800-2M3.800.8a3.900 3.900 0 0 1-6.800 2" stroke="#2a7ae0" stroke-width="1.600" fill="none"/><path d="M4.200-4.800v3H1.200zM-4.200 4.800v-3h3z" fill="#2a7ae0"/></g></svg>
<div style="left:1398.5px;top:93.5px;width:1px;height:12px;background:#c6c6c6;"></div>
<div style="left:1263px;top:116px;width:212.6px;height:526px;background:#fff;border:1px solid #868c96;border-right:none;"></div>
<div style="left:1264px;top:624.5px;width:211.6px;height:16.5px;background:#f0f0f0;"></div>
<div style="left:1281px;top:631.5px;width:154.5px;height:2px;background:#8a8a8a;"></div>
<div style="left:1274px;top:125px;width:1px;height:137px;background:repeating-linear-gradient(#b0b0b0 0 1px,transparent 1px 2px);"></div>
<div style="left:1279px;top:125px;width:6px;height:1px;background:repeating-linear-gradient(90deg,#b0b0b0 0 1px,transparent 1px 2px);"></div>
<svg style="left:1270px;top:121px;" width="9" height="9" viewBox="0 0 9 9"><rect x=".5" y=".5" width="8" height="8" rx="1" fill="#fff" stroke="#a9a9b4"/><path d="M2.500 4.500h4" stroke="#3a4a9a" stroke-width="1"/><path d="M4.500 2.500v4" stroke="#3a4a9a" stroke-width="1"/></svg>
<svg style="left:1287.5px;top:119.4px;" width="10.5" height="11.5" viewBox="0 0 20 20"><path d="M1.600 2.200h16.800v1.600l-6.200 6.800v7.600l-4.400 1.400v-9L1.600 3.800z" fill="#3d8f8f"/><path d="M1.600 2.200h8.400v17l-2.200.4v-9L1.600 3.800z" fill="#7fc2c2"/><path d="M1.600 2.200h16.800v1.300H1.600z" fill="#2a6c6c"/></svg>
<span style="top:116.8px;line-height:16px;font-size:10.4px;color:#111;letter-spacing:0.275px;left:1305px;">Filtrar por Tomador</span>
<div style="left:1279px;top:140px;width:6px;height:1px;background:repeating-linear-gradient(90deg,#b0b0b0 0 1px,transparent 1px 2px);"></div>
<svg style="left:1270px;top:136px;" width="9" height="9" viewBox="0 0 9 9"><rect x=".5" y=".5" width="8" height="8" rx="1" fill="#fff" stroke="#a9a9b4"/><path d="M2.500 4.500h4" stroke="#3a4a9a" stroke-width="1"/><path d="M4.500 2.500v4" stroke="#3a4a9a" stroke-width="1"/></svg>
<svg style="left:1287.5px;top:134.487px;" width="10.5" height="11.5" viewBox="0 0 20 20"><path d="M1.600 2.200h16.800v1.600l-6.200 6.800v7.600l-4.400 1.400v-9L1.600 3.800z" fill="#3d8f8f"/><path d="M1.600 2.200h8.400v17l-2.200.4v-9L1.600 3.800z" fill="#7fc2c2"/><path d="M1.600 2.200h16.800v1.300H1.600z" fill="#2a6c6c"/></svg>
<span style="top:131.887px;line-height:16px;font-size:10.4px;color:#111;letter-spacing:0.171px;left:1305px;">Filtrar por Emissor</span>
<div style="left:1279px;top:155px;width:6px;height:1px;background:repeating-linear-gradient(90deg,#b0b0b0 0 1px,transparent 1px 2px);"></div>
<svg style="left:1270px;top:151px;" width="9" height="9" viewBox="0 0 9 9"><rect x=".5" y=".5" width="8" height="8" rx="1" fill="#fff" stroke="#a9a9b4"/><path d="M2.500 4.500h4" stroke="#3a4a9a" stroke-width="1"/><path d="M4.500 2.500v4" stroke="#3a4a9a" stroke-width="1"/></svg>
<svg style="left:1287.5px;top:149.574px;" width="10.5" height="11.5" viewBox="0 0 20 20"><path d="M1.600 2.200h16.800v1.600l-6.200 6.800v7.600l-4.400 1.400v-9L1.600 3.800z" fill="#3d8f8f"/><path d="M1.600 2.200h8.400v17l-2.200.4v-9L1.600 3.800z" fill="#7fc2c2"/><path d="M1.600 2.200h16.800v1.300H1.600z" fill="#2a6c6c"/></svg>
<span style="top:146.974px;line-height:16px;font-size:10.4px;color:#111;letter-spacing:0.203px;left:1305px;">Filtrar por Tipo Doc</span>
<div style="left:1279px;top:170px;width:6px;height:1px;background:repeating-linear-gradient(90deg,#b0b0b0 0 1px,transparent 1px 2px);"></div>
<svg style="left:1270px;top:166px;" width="9" height="9" viewBox="0 0 9 9"><rect x=".5" y=".5" width="8" height="8" rx="1" fill="#fff" stroke="#a9a9b4"/><path d="M2.500 4.500h4" stroke="#3a4a9a" stroke-width="1"/><path d="M4.500 2.500v4" stroke="#3a4a9a" stroke-width="1"/></svg>
<svg style="left:1287.5px;top:164.661px;" width="10.5" height="11.5" viewBox="0 0 20 20"><path d="M1.600 2.200h16.800v1.600l-6.200 6.800v7.600l-4.400 1.400v-9L1.600 3.800z" fill="#3d8f8f"/><path d="M1.600 2.200h8.400v17l-2.200.4v-9L1.600 3.800z" fill="#7fc2c2"/><path d="M1.600 2.200h16.800v1.300H1.600z" fill="#2a6c6c"/></svg>
<span style="top:162.061px;line-height:16px;font-size:10.4px;color:#111;letter-spacing:0.107px;left:1305px;">Filtrar por Etiquetas</span>
<div style="left:1279px;top:185px;width:6px;height:1px;background:repeating-linear-gradient(90deg,#b0b0b0 0 1px,transparent 1px 2px);"></div>
<svg style="left:1270px;top:181px;" width="9" height="9" viewBox="0 0 9 9"><rect x=".5" y=".5" width="8" height="8" rx="1" fill="#fff" stroke="#a9a9b4"/><path d="M2.500 4.500h4" stroke="#3a4a9a" stroke-width="1"/><path d="M4.500 2.500v4" stroke="#3a4a9a" stroke-width="1"/></svg>
<svg style="left:1287.5px;top:179.748px;" width="10.5" height="11.5" viewBox="0 0 20 20"><path d="M1.600 2.200h16.800v1.600l-6.200 6.800v7.600l-4.400 1.400v-9L1.600 3.800z" fill="#3d8f8f"/><path d="M1.600 2.200h8.400v17l-2.200.4v-9L1.600 3.800z" fill="#7fc2c2"/><path d="M1.600 2.200h16.800v1.300H1.600z" fill="#2a6c6c"/></svg>
<span style="top:177.148px;line-height:16px;font-size:10.4px;color:#111;letter-spacing:0.177px;left:1305px;">Filtrar por Status</span>
<div style="left:1279px;top:200px;width:6px;height:1px;background:repeating-linear-gradient(90deg,#b0b0b0 0 1px,transparent 1px 2px);"></div>
<svg style="left:1270px;top:196px;" width="9" height="9" viewBox="0 0 9 9"><rect x=".5" y=".5" width="8" height="8" rx="1" fill="#fff" stroke="#a9a9b4"/><path d="M2.500 4.500h4" stroke="#3a4a9a" stroke-width="1"/><path d="M4.500 2.500v4" stroke="#3a4a9a" stroke-width="1"/></svg>
<svg style="left:1285px;top:192.835px;" width="15" height="15" viewBox="0 0 20 20"><circle cx="10" cy="10" r="9.4" fill="#17c3b2"/><circle cx="10" cy="10" r="9.4" fill="none" stroke="#0fa3c9" stroke-width="1.2"/><rect x="5.8" y="4.8" width="8.4" height="11" rx="1.3" fill="none" stroke="#fff" stroke-width="1.3"/><rect x="8" y="3.6" width="4" height="2.4" rx=".8" fill="#fff"/><path d="M7.9 10.6l1.6 1.6 2.8-3" stroke="#fff" stroke-width="1.2" fill="none"/></svg>
<span style="top:192.235px;line-height:16px;font-size:10.4px;color:#111;letter-spacing:0.123px;left:1305px;">Filtrar por Auditoria</span>
<div style="left:1279px;top:215px;width:6px;height:1px;background:repeating-linear-gradient(90deg,#b0b0b0 0 1px,transparent 1px 2px);"></div>
<svg style="left:1270px;top:211px;" width="9" height="9" viewBox="0 0 9 9"><rect x=".5" y=".5" width="8" height="8" rx="1" fill="#fff" stroke="#a9a9b4"/><path d="M2.500 4.500h4" stroke="#3a4a9a" stroke-width="1"/><path d="M4.500 2.500v4" stroke="#3a4a9a" stroke-width="1"/></svg>
<svg style="left:1287.5px;top:209.922px;" width="10.5" height="11.5" viewBox="0 0 20 20"><path d="M1.600 2.200h16.800v1.600l-6.200 6.800v7.600l-4.400 1.400v-9L1.600 3.800z" fill="#3d8f8f"/><path d="M1.600 2.200h8.400v17l-2.200.4v-9L1.600 3.800z" fill="#7fc2c2"/><path d="M1.600 2.200h16.800v1.300H1.600z" fill="#2a6c6c"/></svg>
<span style="top:207.322px;line-height:16px;font-size:10.4px;color:#111;letter-spacing:0.106px;left:1305px;">Filtrar por Manifestação</span>
<div style="left:1279px;top:231px;width:6px;height:1px;background:repeating-linear-gradient(90deg,#b0b0b0 0 1px,transparent 1px 2px);"></div>
<svg style="left:1270px;top:227px;" width="9" height="9" viewBox="0 0 9 9"><rect x=".5" y=".5" width="8" height="8" rx="1" fill="#fff" stroke="#a9a9b4"/><path d="M2.500 4.500h4" stroke="#3a4a9a" stroke-width="1"/><path d="M4.500 2.500v4" stroke="#3a4a9a" stroke-width="1"/></svg>
<svg style="left:1287.5px;top:225.009px;" width="10.5" height="11.5" viewBox="0 0 20 20"><path d="M1.600 2.200h16.800v1.600l-6.200 6.800v7.600l-4.400 1.400v-9L1.600 3.800z" fill="#3d8f8f"/><path d="M1.600 2.200h8.400v17l-2.200.4v-9L1.600 3.800z" fill="#7fc2c2"/><path d="M1.600 2.200h16.800v1.300H1.600z" fill="#2a6c6c"/></svg>
<span style="top:222.409px;line-height:16px;font-size:10.4px;color:#111;letter-spacing:0.195px;left:1305px;">Filtrar por Operações</span>
<div style="left:1279px;top:246px;width:6px;height:1px;background:repeating-linear-gradient(90deg,#b0b0b0 0 1px,transparent 1px 2px);"></div>
<svg style="left:1270px;top:242px;" width="9" height="9" viewBox="0 0 9 9"><rect x=".5" y=".5" width="8" height="8" rx="1" fill="#fff" stroke="#a9a9b4"/><path d="M2.500 4.500h4" stroke="#3a4a9a" stroke-width="1"/><path d="M4.500 2.500v4" stroke="#3a4a9a" stroke-width="1"/></svg>
<svg style="left:1286.5px;top:239.096px;" width="13" height="13" viewBox="0 0 20 20"><path d="M1 4V1h3M16 1h3v3M19 16v3h-3M4 19H1v-3" fill="none" stroke="#2a8ae0" stroke-width="1.4"/><rect x="4.2" y="4.6" width="7.4" height="6.6" fill="#fbc02d"/><rect x="8.4" y="8.6" width="7.6" height="7" fill="#f59a1a"/></svg>
<span style="top:237.496px;line-height:16px;font-size:10.4px;color:#111;letter-spacing:0.038px;left:1305px;">Agrupamento</span>
<div style="left:1279px;top:261px;width:6px;height:1px;background:repeating-linear-gradient(90deg,#b0b0b0 0 1px,transparent 1px 2px);"></div>
<svg style="left:1270px;top:257px;" width="9" height="9" viewBox="0 0 9 9"><rect x=".5" y=".5" width="8" height="8" rx="1" fill="#fff" stroke="#a9a9b4"/><path d="M2.500 4.500h4" stroke="#3a4a9a" stroke-width="1"/></svg>
<svg style="left:1286px;top:253.683px;" width="14" height="14" viewBox="0 0 20 20"><rect x="1.2" y="1" width="10.6" height="16.6" rx="1.6" fill="#fff" stroke="#1a1ad0" stroke-width="1.7"/><path d="M3.4 6.4h6.2M3.4 9.4h6.2M3.4 12.4h3" stroke="#f08a24" stroke-width="1.6"/><rect x="9.6" y="9.8" width="8.8" height="8.4" fill="#fff4e0" stroke="#f08a24" stroke-width="1.2"/><path d="M9.6 13h8.8M9.6 15.8h8.8M13.8 9.8v8.4" stroke="#f08a24" stroke-width="1"/><rect x="14.6" y="13.6" width="2.4" height="1.8" fill="#e03a3a"/></svg>
<span style="top:252.583px;line-height:16px;font-size:10.4px;color:#111;letter-spacing:0.188px;left:1305px;">Relatórios</span>
<div style="left:1292.5px;top:268px;width:1px;height:340px;background:repeating-linear-gradient(#b0b0b0 0 1px,transparent 1px 2px);"></div>
<div style="left:1293px;top:276px;width:11px;height:1px;background:repeating-linear-gradient(90deg,#b0b0b0 0 1px,transparent 1px 2px);"></div>
<div style="left:1309.8px;top:274.97px;width:3px;height:3px;background:#111;border-radius:1px;"></div>
<span style="top:267.67px;line-height:16px;font-size:10.4px;color:#111;letter-spacing:0.16px;left:1323px;width:152.500px;overflow:hidden;">Emitidos por terceiros</span>
<div style="left:1293px;top:291px;width:11px;height:1px;background:repeating-linear-gradient(90deg,#b0b0b0 0 1px,transparent 1px 2px);"></div>
<div style="left:1309.8px;top:290.057px;width:3px;height:3px;background:#111;border-radius:1px;"></div>
<span style="top:282.757px;line-height:16px;font-size:10.4px;color:#111;letter-spacing:0.141px;left:1323px;width:152.500px;overflow:hidden;">Emitidos pela empresa</span>
<div style="left:1293px;top:306px;width:11px;height:1px;background:repeating-linear-gradient(90deg,#b0b0b0 0 1px,transparent 1px 2px);"></div>
<svg style="left:1306.5px;top:302.444px;" width="9" height="8" viewBox="0 0 9 8"><path d="M1 4.200l2.600 2.600L8 1.400" stroke="#22a022" stroke-width="1.600" fill="none"/></svg>
<span style="top:297.844px;line-height:16px;font-size:10.4px;color:#111;letter-spacing:0.161px;left:1323px;width:152.500px;overflow:hidden;">NFe : Dados sintéticos</span>
<div style="left:1293px;top:321px;width:11px;height:1px;background:repeating-linear-gradient(90deg,#b0b0b0 0 1px,transparent 1px 2px);"></div>
<svg style="left:1306.5px;top:317.531px;" width="9" height="8" viewBox="0 0 9 8"><path d="M1 4.200l2.600 2.600L8 1.400" stroke="#22a022" stroke-width="1.600" fill="none"/></svg>
<span style="top:312.931px;line-height:16px;font-size:10.4px;color:#111;letter-spacing:0.173px;left:1323px;width:152.500px;overflow:hidden;">NFe : Dados analíticos</span>
<div style="left:1293px;top:336px;width:11px;height:1px;background:repeating-linear-gradient(90deg,#b0b0b0 0 1px,transparent 1px 2px);"></div>
<svg style="left:1306.5px;top:332.618px;" width="9" height="8" viewBox="0 0 9 8"><path d="M1 4.200l2.600 2.600L8 1.400" stroke="#22a022" stroke-width="1.600" fill="none"/></svg>
<span style="top:328.018px;line-height:16px;font-size:10.4px;color:#111;letter-spacing:0.273px;left:1323px;width:152.500px;overflow:hidden;">CTe : Dados sintéticos</span>
<div style="left:1293px;top:351px;width:11px;height:1px;background:repeating-linear-gradient(90deg,#b0b0b0 0 1px,transparent 1px 2px);"></div>
<svg style="left:1306.5px;top:347.705px;" width="9" height="8" viewBox="0 0 9 8"><path d="M1 4.200l2.600 2.600L8 1.400" stroke="#22a022" stroke-width="1.600" fill="none"/></svg>
<span style="top:343.105px;line-height:16px;font-size:10.4px;color:#111;letter-spacing:0.285px;left:1323px;width:152.500px;overflow:hidden;">CTe : Dados analíticos</span>
<div style="left:1293px;top:366px;width:11px;height:1px;background:repeating-linear-gradient(90deg,#b0b0b0 0 1px,transparent 1px 2px);"></div>
<svg style="left:1306.5px;top:362.792px;" width="9" height="8" viewBox="0 0 9 8"><path d="M1 4.200l2.600 2.600L8 1.400" stroke="#22a022" stroke-width="1.600" fill="none"/></svg>
<span style="top:358.192px;line-height:16px;font-size:10.4px;color:#111;letter-spacing:0.124px;left:1323px;width:152.500px;overflow:hidden;">Docs cancelados</span>
<div style="left:1293px;top:381px;width:11px;height:1px;background:repeating-linear-gradient(90deg,#b0b0b0 0 1px,transparent 1px 2px);"></div>
<svg style="left:1306.5px;top:377.879px;" width="9" height="8" viewBox="0 0 9 8"><path d="M1 4.200l2.600 2.600L8 1.400" stroke="#22a022" stroke-width="1.600" fill="none"/></svg>
<span style="top:373.279px;line-height:16px;font-size:10.4px;color:#111;letter-spacing:0.352px;left:1323px;width:152.500px;overflow:hidden;">Cartas de Correção</span>
<div style="left:1293px;top:396px;width:11px;height:1px;background:repeating-linear-gradient(90deg,#b0b0b0 0 1px,transparent 1px 2px);"></div>
<svg style="left:1306.5px;top:392.966px;" width="9" height="8" viewBox="0 0 9 8"><path d="M1 4.200l2.600 2.600L8 1.400" stroke="#22a022" stroke-width="1.600" fill="none"/></svg>
<span style="top:388.366px;line-height:16px;font-size:10.4px;color:#111;letter-spacing:0.238px;left:1323px;width:152.500px;overflow:hidden;">Averbação de Embarque</span>
<div style="left:1293px;top:412px;width:11px;height:1px;background:repeating-linear-gradient(90deg,#b0b0b0 0 1px,transparent 1px 2px);"></div>
<svg style="left:1306.5px;top:408.053px;" width="9" height="8" viewBox="0 0 9 8"><path d="M1 4.200l2.600 2.600L8 1.400" stroke="#22a022" stroke-width="1.600" fill="none"/></svg>
<span style="top:403.453px;line-height:16px;font-size:10.4px;color:#111;letter-spacing:0.289px;left:1323px;width:152.500px;overflow:hidden;">Export.Indireta : Saldos e Prazos</span>
<div style="left:1293px;top:427px;width:11px;height:1px;background:repeating-linear-gradient(90deg,#b0b0b0 0 1px,transparent 1px 2px);"></div>
<svg style="left:1306.5px;top:423.14px;" width="9" height="8" viewBox="0 0 9 8"><path d="M1 4.200l2.600 2.600L8 1.400" stroke="#22a022" stroke-width="1.600" fill="none"/></svg>
<span style="top:418.54px;line-height:16px;font-size:10.4px;color:#111;letter-spacing:0.182px;left:1323px;width:152.500px;overflow:hidden;">Export.Direta : Formação de Lote</span>
<div style="left:1293px;top:442px;width:11px;height:1px;background:repeating-linear-gradient(90deg,#b0b0b0 0 1px,transparent 1px 2px);"></div>
<svg style="left:1306.5px;top:438.227px;" width="9" height="8" viewBox="0 0 9 8"><path d="M1 4.200l2.600 2.600L8 1.400" stroke="#22a022" stroke-width="1.600" fill="none"/></svg>
<span style="top:433.627px;line-height:16px;font-size:10.4px;color:#111;letter-spacing:0.217px;left:1323px;width:152.500px;overflow:hidden;">Export.Geral : Saldos e Prazos</span>
<div style="left:1293px;top:457px;width:11px;height:1px;background:repeating-linear-gradient(90deg,#b0b0b0 0 1px,transparent 1px 2px);"></div>
<svg style="left:1306.5px;top:453.314px;" width="9" height="8" viewBox="0 0 9 8"><path d="M1 4.200l2.600 2.600L8 1.400" stroke="#22a022" stroke-width="1.600" fill="none"/></svg>
<span style="top:448.714px;line-height:16px;font-size:10.4px;color:#111;letter-spacing:0.099px;left:1323px;width:152.500px;overflow:hidden;">NFe pendentes transp</span>
<div style="left:1293px;top:472px;width:11px;height:1px;background:repeating-linear-gradient(90deg,#b0b0b0 0 1px,transparent 1px 2px);"></div>
<svg style="left:1306.5px;top:468.401px;" width="9" height="8" viewBox="0 0 9 8"><path d="M1 4.200l2.600 2.600L8 1.400" stroke="#22a022" stroke-width="1.600" fill="none"/></svg>
<span style="top:463.801px;line-height:16px;font-size:10.4px;color:#111;letter-spacing:0.345px;left:1323px;width:152.500px;overflow:hidden;">CTe incorretos</span>
<div style="left:1293px;top:487px;width:11px;height:1px;background:repeating-linear-gradient(90deg,#b0b0b0 0 1px,transparent 1px 2px);"></div>
<svg style="left:1306.5px;top:483.488px;" width="9" height="8" viewBox="0 0 9 8"><path d="M1 4.200l2.600 2.600L8 1.400" stroke="#22a022" stroke-width="1.600" fill="none"/></svg>
<span style="top:478.888px;line-height:16px;font-size:10.4px;color:#111;letter-spacing:0.19px;left:1323px;width:152.500px;overflow:hidden;">CTe cobrança duplicada</span>
<div style="left:1293px;top:502px;width:11px;height:1px;background:repeating-linear-gradient(90deg,#b0b0b0 0 1px,transparent 1px 2px);"></div>
<svg style="left:1306.5px;top:498.575px;" width="9" height="8" viewBox="0 0 9 8"><path d="M1 4.200l2.600 2.600L8 1.400" stroke="#22a022" stroke-width="1.600" fill="none"/></svg>
<span style="top:493.975px;line-height:16px;font-size:10.4px;color:#111;letter-spacing:0.148px;left:1323px;width:152.500px;overflow:hidden;">Notas de Devolução</span>
<div style="left:1293px;top:517px;width:11px;height:1px;background:repeating-linear-gradient(90deg,#b0b0b0 0 1px,transparent 1px 2px);"></div>
<svg style="left:1306.5px;top:513.662px;" width="9" height="8" viewBox="0 0 9 8"><path d="M1 4.200l2.600 2.600L8 1.400" stroke="#22a022" stroke-width="1.600" fill="none"/></svg>
<span style="top:509.062px;line-height:16px;font-size:10.4px;color:#111;letter-spacing:0.42px;left:1323px;width:152.500px;overflow:hidden;">Dev CNPJ próprio</span>
<div style="left:1293px;top:532px;width:11px;height:1px;background:repeating-linear-gradient(90deg,#b0b0b0 0 1px,transparent 1px 2px);"></div>
<svg style="left:1306.5px;top:528.749px;" width="9" height="8" viewBox="0 0 9 8"><path d="M1 4.200l2.600 2.600L8 1.400" stroke="#22a022" stroke-width="1.600" fill="none"/></svg>
<span style="top:524.149px;line-height:16px;font-size:10.4px;color:#111;letter-spacing:0.16px;left:1323px;width:152.500px;overflow:hidden;">Notas recusadas</span>
<div style="left:1293px;top:547px;width:11px;height:1px;background:repeating-linear-gradient(90deg,#b0b0b0 0 1px,transparent 1px 2px);"></div>
<svg style="left:1306.5px;top:543.836px;" width="9" height="8" viewBox="0 0 9 8"><path d="M1 4.200l2.600 2.600L8 1.400" stroke="#22a022" stroke-width="1.600" fill="none"/></svg>
<span style="top:539.236px;line-height:16px;font-size:10.4px;color:#111;letter-spacing:0.137px;left:1323px;width:152.500px;overflow:hidden;">Mercadorias entregues</span>
<div style="left:1293px;top:562px;width:11px;height:1px;background:repeating-linear-gradient(90deg,#b0b0b0 0 1px,transparent 1px 2px);"></div>
<svg style="left:1306.5px;top:558.923px;" width="9" height="8" viewBox="0 0 9 8"><path d="M1 4.200l2.600 2.600L8 1.400" stroke="#22a022" stroke-width="1.600" fill="none"/></svg>
<span style="top:554.323px;line-height:16px;font-size:10.4px;color:#111;letter-spacing:0.074px;left:1323px;width:152.500px;overflow:hidden;">NFe pendentes coleta</span>
<div style="left:1293px;top:578px;width:11px;height:1px;background:repeating-linear-gradient(90deg,#b0b0b0 0 1px,transparent 1px 2px);"></div>
<svg style="left:1306.5px;top:574.01px;" width="9" height="8" viewBox="0 0 9 8"><path d="M1 4.200l2.600 2.600L8 1.400" stroke="#22a022" stroke-width="1.600" fill="none"/></svg>
<span style="top:569.41px;line-height:16px;font-size:10.4px;color:#111;letter-spacing:0.087px;left:1323px;width:152.500px;overflow:hidden;">NFe pendente entrega</span>
<div style="left:1293px;top:593px;width:11px;height:1px;background:repeating-linear-gradient(90deg,#b0b0b0 0 1px,transparent 1px 2px);"></div>
<svg style="left:1306.5px;top:589.097px;" width="9" height="8" viewBox="0 0 9 8"><path d="M1 4.200l2.600 2.600L8 1.400" stroke="#22a022" stroke-width="1.600" fill="none"/></svg>
<span style="top:584.497px;line-height:16px;font-size:10.4px;color:#111;letter-spacing:0.345px;left:1323px;width:152.500px;overflow:hidden;">CTe em desacordo</span>
<div style="left:1293px;top:608px;width:11px;height:1px;background:repeating-linear-gradient(90deg,#b0b0b0 0 1px,transparent 1px 2px);"></div>
<div style="left:1309.8px;top:606.884px;width:3px;height:3px;background:#111;border-radius:1px;"></div>
<span style="top:599.584px;line-height:16px;font-size:10.4px;color:#111;letter-spacing:0.324px;left:1323px;width:152.500px;overflow:hidden;">Parceiros Comerciais</span>
<div style="left:1263px;top:645.5px;width:212.7px;height:156.5px;background:#fff;border:1px solid #6a6a6a;"></div>
<svg style="left:1268px;top:650px;" width="18" height="18" viewBox="0 0 20 20"><path d="M10 1.200a8 8 0 0 0-6.400 12.800c.5 1.300 1.200 2.400 2 3.200l4.400.8 4.400-.8c.8-.8 1.500-1.900 2-3.200A8 8 0 0 0 10 1.200z" fill="#4b4f6b"/><ellipse cx="10" cy="8.600" rx="4.300" ry="5" fill="#fff"/><path d="M4.500 17c1-2.600 3-3.600 5.500-3.600s4.500 1 5.500 3.600z" fill="#fff"/><path d="M15.200 13.200l1 2 2.200.3-1.600 1.500.4 2.200-2-1-2 1 .4-2.200-1.600-1.500 2.200-.3z" fill="#f5c23a"/></svg>
<span style="top:650.2px;line-height:16px;font-size:10.4px;color:#1818f4;letter-spacing:0.209px;left:1296px;">[ Dados de usuário e créditos ]</span>
<div style="left:1264px;top:673px;width:210.7px;height:1px;background:#d9d9d9;"></div>
<span style="top:682.6px;line-height:16px;font-size:10.4px;color:#1818f4;font-weight:bold;letter-spacing:0.179px;left:1308.7px;">Plano : ENTERPRISE</span>
<span style="top:703.2px;line-height:16px;font-size:10.4px;color:#1818f4;letter-spacing:0.254px;left:1304px;">[ Gerenciar assinatura ]</span>
<div style="left:1264px;top:730px;width:210.7px;height:1px;background:#d9d9d9;"></div>
<span style="top:735.3px;line-height:16px;font-size:10.4px;color:#1818f4;letter-spacing:0.192px;left:1274.8px;">Créditos especiais : R$ 2.880,5500</span>
<div style="left:1264px;top:757px;width:210.7px;height:1px;background:#d9d9d9;"></div>
<svg style="left:1271px;top:761px;" width="34" height="38.5" viewBox="0 0 34 38.500"><path d="M0 40c0-9 5-12 17-12s17 3 17 12z" fill="#2f8fe0"/><path d="M11 28l6 9 6-9z" fill="#fff"/><path d="M13 27l4 6 4-6v-5h-8z" fill="#e8b48c"/><path d="M6.4 22C3 8 9 1.4 17 1.4S31 8 27.600 22c-1 3-3 4-5 4l1-6H10.400l1 6c-2 0-4-1-5-4z" fill="#9a6030"/><ellipse cx="17" cy="14.600" rx="7.2" ry="8.6" fill="#f3c9a6"/><path d="M9.600 13c1-5 4-7.200 7.400-7.200s6.400 2.200 7.400 7.200c-2-3-4.600-4-7.400-4s-5.400 1-7.400 4z" fill="#9a6030"/><path d="M8 9.600C9 3.600 13 2 17 2s8 1.600 9 7.600" stroke="#2a2a2a" stroke-width="2" fill="none"/><rect x="5.600" y="9.600" width="4" height="7.600" rx="1.800" fill="#2a2a2a"/><path d="M7.600 17c1 5 4 6.400 8 6.400" stroke="#2a2a2a" stroke-width="1.400" fill="none"/><ellipse cx="16.400" cy="23.400" rx="2" ry="1.200" fill="#2a2a2a"/></svg>
<span style="top:765.7px;line-height:16px;font-size:12.29px;color:#1818f4;letter-spacing:0.054px;left:1322px;">Iniciar bate papo com</span>
<span style="top:780.8px;line-height:16px;font-size:12.29px;color:#1818f4;letter-spacing:0.118px;left:1335px;">o time da Fiscal.io</span>
</div></body></html>
